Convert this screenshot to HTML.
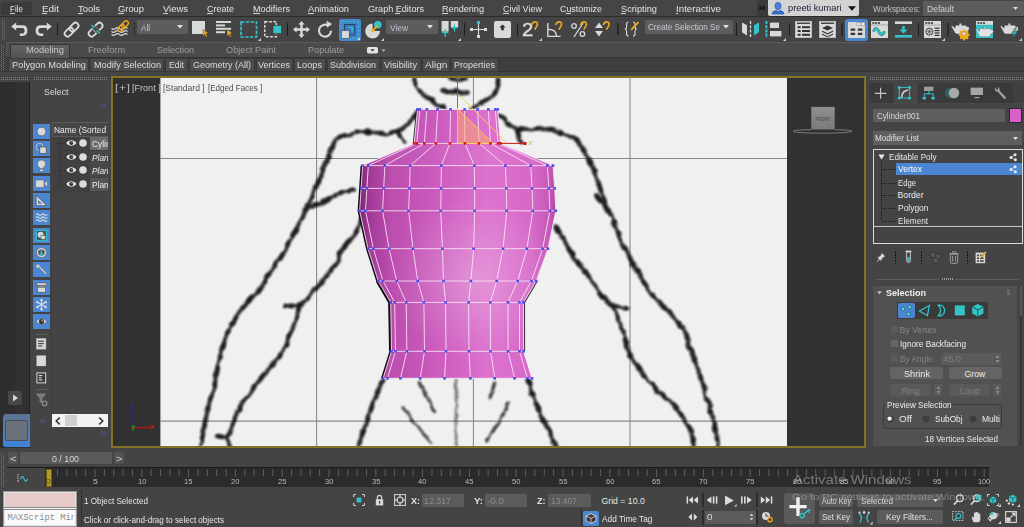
<!DOCTYPE html>
<html lang="en"><head><meta charset="utf-8"><title>3ds Max - Cylinder001</title>
<style>
*{box-sizing:border-box;margin:0;padding:0}
html,body{width:1024px;height:527px;overflow:hidden;background:#444}
body{font-family:"Liberation Sans","DejaVu Sans",sans-serif;font-size:10px;color:#e0e0e0}
#app{position:relative;width:1024px;height:527px;overflow:hidden;background:#444}
.a{position:absolute}
.t{position:absolute;white-space:nowrap;line-height:1}
svg{position:absolute;overflow:visible}

</style></head>
<body>
<div id="app">
<div class="a" style="left:0px;top:0px;width:1024px;height:16px;background:#454545;"></div>
<div class="a" style="left:0px;top:16px;width:1024px;height:1px;background:#2c2c2c;"></div>
<div class="a" style="left:1px;top:2px;width:31px;height:13px;background:#3b3b3b;"></div>
<div class="t" style="left:9.5px;top:2.5px;font-size:9.6px;line-height:12px;color:#e4e4e4;transform:scaleX(0.840);transform-origin:0 50%;">File</div>
<div class="a" style="left:10px;top:13px;width:5px;height:1px;background:#cfcfcf;"></div>
<div class="t" style="left:41.5px;top:2.5px;font-size:9.6px;line-height:12px;color:#e4e4e4;transform:scaleX(1.027);transform-origin:0 50%;">Edit</div>
<div class="a" style="left:42px;top:13px;width:5px;height:1px;background:#cfcfcf;"></div>
<div class="t" style="left:77.5px;top:2.5px;font-size:9.6px;line-height:12px;color:#e4e4e4;transform:scaleX(0.982);transform-origin:0 50%;">Tools</div>
<div class="a" style="left:78px;top:13px;width:5px;height:1px;background:#cfcfcf;"></div>
<div class="t" style="left:117.5px;top:2.5px;font-size:9.6px;line-height:12px;color:#e4e4e4;transform:scaleX(0.975);transform-origin:0 50%;">Group</div>
<div class="a" style="left:118px;top:13px;width:6px;height:1px;background:#cfcfcf;"></div>
<div class="t" style="left:162.5px;top:2.5px;font-size:9.6px;line-height:12px;color:#e4e4e4;transform:scaleX(0.983);transform-origin:0 50%;">Views</div>
<div class="a" style="left:163px;top:13px;width:5px;height:1px;background:#cfcfcf;"></div>
<div class="t" style="left:206.5px;top:2.5px;font-size:9.6px;line-height:12px;color:#e4e4e4;transform:scaleX(0.938);transform-origin:0 50%;">Create</div>
<div class="a" style="left:207px;top:13px;width:6px;height:1px;background:#cfcfcf;"></div>
<div class="t" style="left:252.5px;top:2.5px;font-size:9.6px;line-height:12px;color:#e4e4e4;transform:scaleX(0.951);transform-origin:0 50%;">Modifiers</div>
<div class="a" style="left:253px;top:13px;width:7px;height:1px;background:#cfcfcf;"></div>
<div class="t" style="left:307.5px;top:2.5px;font-size:9.6px;line-height:12px;color:#e4e4e4;transform:scaleX(0.961);transform-origin:0 50%;">Animation</div>
<div class="a" style="left:308px;top:13px;width:6px;height:1px;background:#cfcfcf;"></div>
<div class="t" style="left:367.5px;top:2.5px;font-size:9.6px;line-height:12px;color:#e4e4e4;transform:scaleX(0.946);transform-origin:0 50%;">Graph Editors</div>
<div class="a" style="left:395px;top:13px;width:5px;height:1px;background:#cfcfcf;"></div>
<div class="t" style="left:441.5px;top:2.5px;font-size:9.6px;line-height:12px;color:#e4e4e4;transform:scaleX(0.948);transform-origin:0 50%;">Rendering</div>
<div class="a" style="left:442px;top:13px;width:6px;height:1px;background:#cfcfcf;"></div>
<div class="t" style="left:502.5px;top:2.5px;font-size:9.6px;line-height:12px;color:#e4e4e4;transform:scaleX(0.942);transform-origin:0 50%;">Civil View</div>
<div class="a" style="left:503px;top:13px;width:6px;height:1px;background:#cfcfcf;"></div>
<div class="t" style="left:559.5px;top:2.5px;font-size:9.6px;line-height:12px;color:#e4e4e4;transform:scaleX(0.927);transform-origin:0 50%;">Customize</div>
<div class="a" style="left:566px;top:13px;width:5px;height:1px;background:#cfcfcf;"></div>
<div class="t" style="left:620.5px;top:2.5px;font-size:9.6px;line-height:12px;color:#e4e4e4;transform:scaleX(0.964);transform-origin:0 50%;">Scripting</div>
<div class="a" style="left:621px;top:13px;width:5px;height:1px;background:#cfcfcf;"></div>
<div class="t" style="left:675.5px;top:2.5px;font-size:9.6px;line-height:12px;color:#e4e4e4;transform:scaleX(1.017);transform-origin:0 50%;">Interactive</div>
<div class="a" style="left:676px;top:13px;width:2px;height:1px;background:#cfcfcf;"></div>
<div class="a" style="left:757px;top:0px;width:11px;height:16px;background:#3a3a3a;"></div>
<div class="t" style="left:757.5px;top:1.0px;font-size:11px;line-height:13px;color:#0c0c0c;transform:scaleX(1.250);transform-origin:0 50%;font-weight:bold;">»</div>
<div class="a" style="left:768px;top:0px;width:91px;height:16px;background:#d3d3d3;border-radius:0 0 2px 2px;"></div>
<svg class="a" style="left:771px;top:1px" width="14" height="14" viewBox="0 0 14 14"><ellipse cx="7" cy="5" rx="3" ry="3.6" fill="#4a80d8" stroke="#2458b0" stroke-width="0.8"/><path d="M1 13 Q1.5 9.8 5 9.6 L7 10.6 L9 9.6 Q12.5 9.8 13 13 Z" fill="#3a70d0" stroke="#2458b0" stroke-width="0.8"/></svg>
<div class="t" style="left:788.0px;top:2.0px;font-size:9.6px;line-height:12px;color:#26203a;transform:scaleX(0.965);transform-origin:0 50%;">preeti kumari</div>
<svg class="a" style="left:848px;top:6px" width="8" height="5" viewBox="0 0 8 5"><path d="M0 0.3H8L4 4.8Z" fill="#101010"/></svg>
<div class="t" style="left:872.5px;top:3.0px;font-size:9.4px;line-height:11px;color:#c4c4c4;transform:scaleX(0.870);transform-origin:0 50%;">Workspaces:</div>
<div class="a" style="left:923px;top:1px;width:101px;height:15px;background:#5c5c5c;"></div>
<div class="t" style="left:926.5px;top:3.0px;font-size:9.4px;line-height:11px;color:#d0d0d0;transform:scaleX(0.909);transform-origin:0 50%;">Default</div>
<svg class="a" style="left:1013px;top:7px" width="5" height="3" viewBox="0 0 5 3"><path d="M0 0H5L2.5 3Z" fill="#dcdcdc"/></svg>
<div class="a" style="left:0px;top:17px;width:1024px;height:25px;background:#444;"></div>
<div class="a" style="left:2px;top:19px;width:1px;height:21px;background:repeating-linear-gradient(#9a9a9a 0 1px,transparent 1px 2px);opacity:.55"></div><div class="a" style="left:4px;top:20px;width:1px;height:20px;background:repeating-linear-gradient(#9a9a9a 0 1px,transparent 1px 2px);opacity:.55"></div>
<svg class="a" style="left:11px;top:22px" width="17" height="15" viewBox="0 0 17 15"><path d="M0.2 4.6L5.2 0.6V3.3H11.4Q16.4 3.3 16.4 8.6Q16.4 14 11.4 14H8.8V11.4H11.4Q13.6 11.4 13.6 8.6Q13.6 5.9 11.4 5.9H5.2V8.6Z" fill="#d9d9d9"/></svg>
<svg class="a" style="left:35px;top:22px" width="17" height="15" viewBox="0 0 17 15"><path d="M16.8 4.6L11.8 0.6V3.3H5.6Q0.6 3.3 0.6 8.6Q0.6 14 5.6 14H8.2V11.4H5.6Q3.4 11.4 3.4 8.6Q3.4 5.9 5.6 5.9H11.8V8.6Z" fill="#d9d9d9"/></svg>
<div class="a" style="left:57px;top:23px;width:1px;height:13px;background:#1c1c1c;"></div>
<svg class="a" style="left:64px;top:22px" width="15" height="15" viewBox="0 0 15 15"><g fill="none" stroke="#d9d9d9" stroke-width="1.8"><rect x="-3" y="-5" width="6" height="10" rx="3" transform="translate(5.1 10.1) rotate(45)"/><rect x="-3" y="-5" width="6" height="10" rx="3" transform="translate(10.1 5.1) rotate(45)"/></g></svg>
<svg class="a" style="left:88px;top:22px" width="15" height="15" viewBox="0 0 15 15"><g fill="none" stroke="#d9d9d9" stroke-width="1.8"><rect x="-3" y="-5" width="6" height="10" rx="3" transform="translate(5.1 10.1) rotate(45)"/><rect x="-3" y="-5" width="6" height="10" rx="3" transform="translate(10.1 5.1) rotate(45)"/></g><line x1="2.6" y1="2.2" x2="12.6" y2="12.2" stroke="#444" stroke-width="3.6"/><line x1="3.4" y1="3" x2="6.6" y2="6.2" stroke="#33c3c8" stroke-width="1.4"/><line x1="8.6" y1="8.2" x2="11.8" y2="11.4" stroke="#33c3c8" stroke-width="1.4"/></svg>
<svg class="a" style="left:111px;top:21px" width="18" height="17" viewBox="0 0 18 17"><g fill="none" stroke="#d9d9d9" stroke-width="1.2"><path d="M0.5 7.5q2 1.8 4 0t4 0t4 0t4 0"/><path d="M0.5 10.5q2 1.8 4 0t4 0t4 0t4 0"/><path d="M0.5 13.5q2 1.8 4 0t4 0t4 0t4 0"/></g><g fill="none" stroke="#f2a91c" stroke-width="1.4"><rect x="-2.3" y="-3.8" width="4.6" height="7.6" rx="2.3" transform="translate(10.2 7) rotate(45)"/><rect x="-2.3" y="-3.8" width="4.6" height="7.6" rx="2.3" transform="translate(14 3.2) rotate(45)"/></g></svg>
<div class="a" style="left:134px;top:23px;width:1px;height:13px;background:repeating-linear-gradient(#1a1a1a 0 1px,transparent 1px 2px)"></div>
<div class="a" style="left:137px;top:20px;width:51px;height:14px;background:#5d5d5d;"></div>
<div class="t" style="left:140.5px;top:21.5px;font-size:9.6px;line-height:12px;color:#b9c4d2;transform:scaleX(0.843);transform-origin:0 50%;">All</div>
<svg class="a" style="left:177px;top:25px" width="6" height="4" viewBox="0 0 6 4"><path d="M0 0H6L3 3.6Z" fill="#e0e0e0"/></svg>
<svg class="a" style="left:192px;top:21px" width="17" height="17" viewBox="0 0 17 17"><rect x="0" y="0" width="13" height="13" fill="#d9d9d9"/><path d="M11 8.2L16.6 12.4L14 12.8L15.3 15.6L14.2 16.2L12.9 13.4L11 15.2Z" fill="#f2a91c" stroke="#444" stroke-width="0.4"/></svg>
<svg class="a" style="left:216px;top:21px" width="17" height="17" viewBox="0 0 17 17"><g fill="#d9d9d9"><rect x="0" y="0" width="15" height="2"/><rect x="0" y="3.4" width="9" height="2"/><rect x="0" y="6.8" width="15" height="2"/><rect x="0" y="10.2" width="9" height="2"/></g><path d="M11 8.2L16.6 12.4L14 12.8L15.3 15.6L14.2 16.2L12.9 13.4L11 15.2Z" fill="#f2a91c" stroke="#444" stroke-width="0.4"/></svg>
<svg class="a" style="left:240px;top:21px" width="18" height="17" viewBox="0 0 18 17"><rect x="1" y="1" width="15.5" height="15" fill="none" stroke="#33c3c8" stroke-width="1.7" stroke-dasharray="3.4 1.4"/></svg>
<svg class="a" style="left:258px;top:38px" width="3" height="3" viewBox="0 0 3 3"><path d="M3 0V3H0Z" fill="#cfcfcf"/></svg>
<svg class="a" style="left:264px;top:21px" width="18" height="17" viewBox="0 0 18 17"><rect x="0.8" y="0.8" width="11.6" height="15" fill="none" stroke="#d9d9d9" stroke-width="1.5" stroke-dasharray="2.8 1.5"/><rect x="9" y="4.4" width="8.4" height="8" fill="#33c3c8" stroke="#444" stroke-width="0.8"/></svg>
<div class="a" style="left:287px;top:23px;width:1px;height:13px;background:#1c1c1c;"></div>
<svg class="a" style="left:293px;top:21px" width="17" height="17" viewBox="0 0 17 17"><path d="M8.5 0L11.6 3.6H9.7V7.3H13.4V5.4L17 8.5L13.4 11.6V9.7H9.7V13.4H11.6L8.5 17L5.4 13.4H7.3V9.7H3.6V11.6L0 8.5L3.6 5.4V7.3H7.3V3.6H5.4Z" fill="#d9d9d9"/></svg>
<svg class="a" style="left:317px;top:21px" width="16" height="17" viewBox="0 0 16 17"><path d="M11.2 4.6A6 6 0 1 0 14 9.8" fill="none" stroke="#d9d9d9" stroke-width="2.1"/><path d="M9 0.2L15 2.6L10.6 7Z" fill="#d9d9d9" transform="rotate(8 12 3.5)"/></svg>
<div class="a" style="left:339px;top:19px;width:22px;height:22px;background:#4b86d4;border-radius:2px;"></div>
<svg class="a" style="left:341px;top:21px" width="18" height="18" viewBox="0 0 18 18"><rect x="1" y="1" width="16" height="16" fill="none" stroke="#33c3c8" stroke-width="1.3" stroke-dasharray="2.6 1.3"/><rect x="1.6" y="1.6" width="14.8" height="14.8" fill="none" stroke="#1c2c3c" stroke-width="0.5" stroke-dasharray="2.6 1.3" opacity=".6"/><rect x="3.4" y="3.6" width="10.6" height="10.4" fill="#3f78c6" stroke="#22354f" stroke-width="0.8"/><path d="M7 6.4H11.2V10.6" fill="none" stroke="#33c3c8" stroke-width="1.4"/><rect x="0.6" y="9.6" width="7.6" height="7.6" fill="#d9d9d9" stroke="#3a3a3a" stroke-width="0.5"/></svg>
<svg class="a" style="left:357px;top:37px" width="3" height="3" viewBox="0 0 3 3"><path d="M3 0V3H0Z" fill="#cfcfcf"/></svg>
<svg class="a" style="left:365px;top:21px" width="18" height="18" viewBox="0 0 18 18"><circle cx="7.6" cy="10" r="7.4" fill="#d9d9d9"/><path d="M7.6 10L7.6 1.5A8 8 0 0 1 16.2 10Z" fill="#444"/><circle cx="12.8" cy="3.8" r="3.8" fill="#33c3c8"/><line x1="8" y1="9.4" x2="12.2" y2="4.6" stroke="#f2a91c" stroke-width="1.8"/><rect x="6.6" y="8" width="2.8" height="2.8" fill="#f2a91c" transform="rotate(45 8 9.4)"/></svg>
<svg class="a" style="left:381px;top:38px" width="3" height="3" viewBox="0 0 3 3"><path d="M3 0V3H0Z" fill="#cfcfcf"/></svg>
<div class="a" style="left:386px;top:20px;width:52px;height:14px;background:#5d5d5d;"></div>
<div class="t" style="left:389.5px;top:21.5px;font-size:9.6px;line-height:12px;color:#b9c0cc;transform:scaleX(0.873);transform-origin:0 50%;">View</div>
<svg class="a" style="left:427px;top:25px" width="6" height="4" viewBox="0 0 6 4"><path d="M0 0H6L3 3.6Z" fill="#e0e0e0"/></svg>
<svg class="a" style="left:441px;top:21px" width="18" height="18" viewBox="0 0 18 18"><rect x="0.6" y="0" width="7" height="10.6" fill="#d9d9d9"/><rect x="9.8" y="0" width="7.4" height="6.4" fill="#d9d9d9"/><path d="M4.2 8V16M1 11.6H7.4" stroke="#33c3c8" stroke-width="1.3" fill="none"/><path d="M13.4 3.4V10.6M10.4 6.8H16.4" stroke="#33c3c8" stroke-width="1.3" fill="none"/></svg>
<svg class="a" style="left:458px;top:38px" width="3" height="3" viewBox="0 0 3 3"><path d="M3 0V3H0Z" fill="#cfcfcf"/></svg>
<div class="a" style="left:464px;top:23px;width:1px;height:13px;background:#1c1c1c;"></div>
<svg class="a" style="left:470px;top:21px" width="17" height="17" viewBox="0 0 17 17"><path d="M8.5 3V15M1.5 8.5H15.5" stroke="#d9d9d9" stroke-width="1.1" fill="none"/><rect x="7" y="0" width="3" height="3" fill="#33c3c8"/><rect x="0" y="7" width="3" height="3" fill="#d9d9d9"/><rect x="14" y="7" width="3" height="3" fill="#d9d9d9"/><rect x="7" y="14" width="3" height="3" fill="#d9d9d9"/></svg>
<svg class="a" style="left:494px;top:21px" width="17" height="17" viewBox="0 0 17 17"><rect x="0" y="0" width="17" height="17" rx="2.2" fill="#d9d9d9"/><path d="M8.5 3.6L11.6 6.6H9.8V9.2H7.2V6.6H5.4Z" fill="#2e2e2e"/></svg>
<div class="a" style="left:517px;top:23px;width:1px;height:13px;background:#1c1c1c;"></div>
<div class="t" style="left:522.2px;top:19.2px;font-size:18px;line-height:22px;color:#dcdcdc;transform:scaleX(1.128);transform-origin:0 50%;-webkit-text-stroke:0.4px #dcdcdc;">2</div>
<svg class="a" style="left:523px;top:21px" width="18" height="17" viewBox="0 0 18 17"><path d="M8.5 4q1.6 -3.8 4.4 -2.9q2.6 1 0.9 4l-2.1 3.6" fill="none" stroke="#f2a91c" stroke-width="1.6"/></svg>
<svg class="a" style="left:539px;top:38px" width="3" height="3" viewBox="0 0 3 3"><path d="M3 0V3H0Z" fill="#cfcfcf"/></svg>
<svg class="a" style="left:547px;top:21px" width="18" height="17" viewBox="0 0 18 17"><path d="M0.8 2V15.4H13.6M0.8 8.4Q9 8 9.6 15.2" fill="none" stroke="#d9d9d9" stroke-width="1.4"/><path d="M8.6 4q1.6 -3.8 4.4 -2.9q2.6 1 0.9 4l-2.1 3.6" fill="none" stroke="#f2a91c" stroke-width="1.6"/></svg>
<svg class="a" style="left:571px;top:21px" width="18" height="17" viewBox="0 0 18 17"><g fill="none" stroke="#d9d9d9" stroke-width="1.3"><circle cx="3" cy="5" r="2.3"/><circle cx="11.4" cy="13" r="2.3"/><line x1="3" y1="16" x2="12" y2="2"/></g><path d="M9.5 4q1.6 -3.8 4.4 -2.9q2.6 1 0.9 4l-2.1 3.6" fill="none" stroke="#f2a91c" stroke-width="1.6"/></svg>
<svg class="a" style="left:595px;top:21px" width="18" height="17" viewBox="0 0 18 17"><path d="M4 1.6L8 7H0ZM4 15.4L8 10H0Z" fill="#d9d9d9"/><path d="M8.2 4q1.6 -3.8 4.4 -2.9q2.6 1 0.9 4l-2.1 3.6" fill="none" stroke="#f2a91c" stroke-width="1.6"/></svg>
<div class="a" style="left:617px;top:23px;width:2px;height:12px;background:#2a2a2a;"></div>
<svg class="a" style="left:624px;top:21px" width="16" height="17" viewBox="0 0 16 17"><path d="M4.6 1Q2.6 1 2.6 3V6Q2.6 8 0.8 8Q2.6 8 2.6 10V13Q2.6 15 4.6 15M9 1Q11 1 11 3V6Q11 8 12.8 8Q11 8 11 10V13Q11 15 9 15" fill="none" stroke="#d9d9d9" stroke-width="1.1"/><line x1="7.4" y1="8.6" x2="14.4" y2="1.2" stroke="#f2a91c" stroke-width="1.9"/><path d="M6.6 9.6L7 8.2L8 9.2Z" fill="#f2a91c"/></svg>
<div class="a" style="left:645px;top:20px;width:88px;height:14px;background:#5d5d5d;"></div>
<div class="t" style="left:647.5px;top:21.2px;font-size:9.6px;line-height:12px;color:#c6ccd4;transform:scaleX(0.844);transform-origin:0 50%;">Create Selection Se</div>
<svg class="a" style="left:723px;top:25px" width="6" height="4" viewBox="0 0 6 4"><path d="M0 0H6L3 3.6Z" fill="#e0e0e0"/></svg>
<div class="a" style="left:736px;top:23px;width:1px;height:13px;background:#1c1c1c;"></div>
<svg class="a" style="left:742px;top:21px" width="18" height="17" viewBox="0 0 18 17"><path d="M0 1.5L5 4.2V14.4L0 11.2Z" fill="#d9d9d9"/><path d="M17 1.5L12 4.2V14.4L17 11.2Z" fill="#33c3c8"/><line x1="8.5" y1="0" x2="8.5" y2="17" stroke="#d9d9d9" stroke-width="1.3" stroke-dasharray="3 1.3"/></svg>
<svg class="a" style="left:765px;top:21px" width="18" height="17" viewBox="0 0 18 17"><line x1="1.4" y1="0" x2="1.4" y2="17" stroke="#33c3c8" stroke-width="2" stroke-dasharray="3 1.2"/><rect x="5" y="1.6" width="9" height="5.4" fill="#d9d9d9"/><rect x="5" y="10" width="11.4" height="5.4" fill="#d9d9d9"/></svg>
<svg class="a" style="left:783px;top:38px" width="3" height="3" viewBox="0 0 3 3"><path d="M3 0V3H0Z" fill="#cfcfcf"/></svg>
<div class="a" style="left:789px;top:23px;width:1px;height:13px;background:#1c1c1c;"></div>
<svg class="a" style="left:795px;top:21px" width="17" height="17" viewBox="0 0 17 17"><rect x="0.5" y="0.5" width="16" height="16" fill="#d9d9d9" stroke="#bdbdbd" stroke-width="1"/><g fill="#333"><rect x="2" y="1.6" width="13" height="1.3"/><rect x="2.6" y="5.2" width="3" height="2"/><rect x="7" y="5.2" width="8" height="2"/><rect x="2.6" y="9" width="3" height="2"/><rect x="7" y="9" width="8" height="2"/><rect x="2.6" y="12.8" width="3" height="2"/><rect x="7" y="12.8" width="8" height="2"/></g></svg>
<svg class="a" style="left:819px;top:21px" width="17" height="17" viewBox="0 0 17 17"><rect x="0.5" y="0.5" width="16" height="16" fill="#d9d9d9" stroke="#bdbdbd" stroke-width="1"/><g fill="#333"><rect x="2" y="1.6" width="13" height="1.3"/><path d="M8.5 4.4L14 7L8.5 9.6L3 7Z"/><path d="M3 9.6L8.5 12.2L14 9.6L14 10.8L8.5 13.4L3 10.8Z"/><path d="M3 12.6L8.5 15.2L14 12.6L14 13.8L8.5 16.2L3 13.8Z"/></g></svg>
<div class="a" style="left:841px;top:23px;width:2px;height:13px;background:#2c2c2c;"></div>
<div class="a" style="left:845px;top:19px;width:23px;height:22px;background:#4b86d4;border-radius:3px;"></div>
<svg class="a" style="left:848px;top:22px" width="17" height="16" viewBox="0 0 17 16"><rect x="0" y="0" width="17" height="16" fill="#d9d9d9"/><rect x="9" y="0.6" width="3.4" height="3" fill="#f2f2f2" stroke="#777" stroke-width="0.5"/><rect x="13" y="0.6" width="3.4" height="3" fill="#f2f2f2" stroke="#777" stroke-width="0.5"/><g fill="#333"><rect x="2.6" y="6.6" width="4.6" height="2.2" rx=".6"/><rect x="9.8" y="6.6" width="4.6" height="2.2" rx=".6"/><rect x="2.6" y="10.8" width="4.6" height="2.2" rx=".6"/><rect x="9.8" y="10.8" width="4.6" height="2.2" rx=".6"/></g></svg>
<svg class="a" style="left:871px;top:21px" width="17" height="17" viewBox="0 0 17 17"><rect x="0" y="0" width="17" height="17" fill="#d9d9d9"/><rect x="0" y="3.6" width="17" height="0.8" fill="#999"/><g fill="#333"><rect x="1.4" y="1.2" width="2" height="1.6"/><rect x="4.2" y="1.2" width="2" height="1.6"/><rect x="7" y="1.2" width="2" height="1.6"/></g><path d="M2.4 10.6q2.4 -6 5.4 0t5.8 -0.4" fill="none" stroke="#1c7c82" stroke-width="2.8"/><path d="M2.4 10.6q2.4 -6 5.4 0t5.8 -0.4" fill="none" stroke="#33c3c8" stroke-width="1.6"/></svg>
<svg class="a" style="left:895px;top:21px" width="17" height="17" viewBox="0 0 17 17"><rect x="0" y="0.4" width="17" height="2.6" fill="#d9d9d9"/><path d="M7.2 5H9.8V8.6H12.6L8.5 12.6L4.4 8.6H7.2Z" fill="#33c3c8"/><rect x="0" y="14" width="17" height="2.6" fill="#33c3c8"/></svg>
<div class="a" style="left:918px;top:23px;width:1px;height:13px;background:#1c1c1c;"></div>
<svg class="a" style="left:924px;top:21px" width="17" height="17" viewBox="0 0 17 17"><rect x="0" y="0" width="17" height="17" fill="#d9d9d9"/><rect x="0" y="3.6" width="17" height="0.8" fill="#999"/><g fill="#333"><rect x="1.4" y="1.2" width="2" height="1.6"/><rect x="4.2" y="1.2" width="2" height="1.6"/><rect x="7" y="1.2" width="2" height="1.6"/><rect x="10.6" y="6.6" width="5" height="1.2"/><rect x="10.6" y="9" width="5" height="1.2"/><rect x="10.6" y="11.4" width="5" height="1.2"/><rect x="10.6" y="13.8" width="5" height="1.2"/></g><circle cx="5.4" cy="10.6" r="3.6" fill="none" stroke="#333" stroke-width="0.8"/><path d="M5.4 7V14.2M1.8 10.6H9M2.9 8.1L7.9 13.1M7.9 8.1L2.9 13.1" stroke="#333" stroke-width="0.5" fill="none"/></svg>
<svg class="a" style="left:942px;top:38px" width="3" height="3" viewBox="0 0 3 3"><path d="M3 0V3H0Z" fill="#cfcfcf"/></svg>
<div class="a" style="left:947px;top:23px;width:2px;height:13px;background:#2c2c2c;"></div>
<svg class="a" style="left:952px;top:21px" width="18" height="18" viewBox="0 0 18 18"><path d="M8.4 4.6m-4.6 0h9.2q1.4 0 1.6 1.2q2.6 -0.6 2.6 1.6q0 2.2 -2.8 3q-0.6 1.6 -1.8 2.4h-8.4q-1.6 -1.2 -2.2 -3l-2.6 -4.6l0.8 -0.4l3 2.6q0.2 -1.6 0.6 -2.8zM8.4 4.6m-1 -2.2h2v2.2h-2z" fill="#d9d9d9"/><g transform="translate(12.2 12.6)"><path d="M-1 -4.6h2l.3 1.3l1.2 .5l1.1 -.7l1.4 1.4l-.7 1.1l.5 1.2l1.3 .3v2l-1.3 .3l-.5 1.2l.7 1.1l-1.4 1.4l-1.1 -.7l-1.2 .5l-.3 1.3h-2l-.3 -1.3l-1.2 -.5l-1.1 .7l-1.4 -1.4l.7 -1.1l-.5 -1.2l-1.3 -.3v-2l1.3 -.3l.5 -1.2l-.7 -1.1l1.4 -1.4l1.1 .7l1.2 -.5z" fill="#f2a91c" transform="scale(.9)"/><circle r="1.7" fill="#e8e8e8" stroke="#888" stroke-width=".5"/></g></svg>
<svg class="a" style="left:976px;top:21px" width="18" height="17" viewBox="0 0 18 17"><rect x="0" y="0" width="17" height="17" fill="#33c3c8"/><rect x="0" y="0" width="17" height="3.8" fill="#d9d9d9"/><g fill="#333"><rect x="1.4" y="1.2" width="2" height="1.6"/><rect x="4.2" y="1.2" width="2" height="1.6"/><rect x="7" y="1.2" width="2" height="1.6"/></g><path stroke="#4a6a6c" stroke-width="0.4" d="M8.6 7.6m-4.6 0h9.2q1.4 0 1.6 1.2q2.6 -0.6 2.6 1.6q0 2.2 -2.8 3q-0.6 1.6 -1.8 2.4h-8.4q-1.6 -1.2 -2.2 -3l-2.6 -4.6l0.8 -0.4l3 2.6q0.2 -1.6 0.6 -2.8zM8.6 7.6m-1 -2.2h2v2.2h-2z" fill="#e4e4e4"/></svg>
<svg class="a" style="left:1001px;top:21px" width="18" height="18" viewBox="0 0 18 18"><path d="M8.4 4.6m-4.6 0h9.2q1.4 0 1.6 1.2q2.6 -0.6 2.6 1.6q0 2.2 -2.8 3q-0.6 1.6 -1.8 2.4h-8.4q-1.6 -1.2 -2.2 -3l-2.6 -4.6l0.8 -0.4l3 2.6q0.2 -1.6 0.6 -2.8zM8.4 4.6m-1 -2.2h2v2.2h-2z" fill="#d9d9d9"/><path d="M14.2 6.8L10.6 12.2H13L11.4 17L16.4 10.6H13.6L15.6 6.8Z" fill="#33c3c8" stroke="#444" stroke-width=".5"/></svg>
<svg class="a" style="left:1019px;top:38px" width="3" height="3" viewBox="0 0 3 3"><path d="M3 0V3H0Z" fill="#cfcfcf"/></svg>
<div class="a" style="left:0px;top:42px;width:1024px;height:30px;background:#404040;"></div>
<div class="a" style="left:1px;top:44px;width:1px;height:27px;background:repeating-linear-gradient(#9a9a9a 0 1px,transparent 1px 2px);opacity:.55"></div><div class="a" style="left:3px;top:45px;width:1px;height:26px;background:repeating-linear-gradient(#9a9a9a 0 1px,transparent 1px 2px);opacity:.55"></div>
<div class="a" style="left:6px;top:42px;width:1018px;height:16px;background:#4b4b4b;border-top:1px solid #5a5a5a;border-left:1px solid #585858;"></div>
<div class="a" style="left:6px;top:57px;width:1018px;height:1px;background:#333;"></div>
<div class="a" style="left:10px;top:44px;width:60px;height:14px;background:linear-gradient(#626262,#545454);border:1px solid #353535;border-bottom:none;border-radius:2px 2px 0 0;"></div>
<div class="t" style="left:25.5px;top:44.2px;font-size:9.6px;line-height:12px;color:#c4c8cc;transform:scaleX(0.976);transform-origin:0 50%;">Modeling</div>
<div class="t" style="left:87.5px;top:44.2px;font-size:9.6px;line-height:12px;color:#9a9ea2;transform:scaleX(0.951);transform-origin:0 50%;">Freeform</div>
<div class="t" style="left:156.5px;top:44.2px;font-size:9.6px;line-height:12px;color:#9a9ea2;transform:scaleX(0.937);transform-origin:0 50%;">Selection</div>
<div class="t" style="left:225.5px;top:44.2px;font-size:9.6px;line-height:12px;color:#9a9ea2;transform:scaleX(0.957);transform-origin:0 50%;">Object Paint</div>
<div class="t" style="left:307.5px;top:44.2px;font-size:9.6px;line-height:12px;color:#9a9ea2;transform:scaleX(0.950);transform-origin:0 50%;">Populate</div>
<svg class="a" style="left:367px;top:47px" width="20" height="7" viewBox="0 0 20 7"><rect x="0" y="0" width="11" height="6.4" rx="1.6" fill="#e4e4e4"/><path d="M3.4 2.2H7.6L5.5 4.6Z" fill="#333"/><path d="M14.6 2.4H18.6L16.6 4.8Z" fill="#bdbdbd"/></svg>
<div class="a" style="left:6px;top:58px;width:1018px;height:13px;background:#3e3e3e;"></div>
<div class="a" style="left:0px;top:71px;width:1024px;height:1px;background:#363636;"></div>
<div class="a" style="left:0px;top:72px;width:1024px;height:4px;background:#444;"></div>
<div class="a" style="left:8px;top:58px;width:81px;height:14px;background:#4c4c4c;border:1px solid #383838;border-top-color:#3a3a3a;"></div>
<div class="t" style="left:11.5px;top:58.5px;font-size:9.6px;line-height:12px;color:#dcdcdc;transform:scaleX(0.970);transform-origin:0 50%;">Polygon Modeling</div>
<div class="a" style="left:90px;top:58px;width:74px;height:14px;background:#4c4c4c;border:1px solid #383838;border-top-color:#3a3a3a;"></div>
<div class="t" style="left:93.5px;top:58.5px;font-size:9.6px;line-height:12px;color:#dcdcdc;transform:scaleX(0.952);transform-origin:0 50%;">Modify Selection</div>
<div class="a" style="left:165px;top:58px;width:23px;height:14px;background:#4c4c4c;border:1px solid #383838;border-top-color:#3a3a3a;"></div>
<div class="t" style="left:168.5px;top:58.5px;font-size:9.6px;line-height:12px;color:#dcdcdc;transform:scaleX(0.907);transform-origin:0 50%;">Edit</div>
<div class="a" style="left:189px;top:58px;width:66px;height:14px;background:#4c4c4c;border:1px solid #383838;border-top-color:#3a3a3a;"></div>
<div class="t" style="left:192.5px;top:58.5px;font-size:9.6px;line-height:12px;color:#dcdcdc;transform:scaleX(0.938);transform-origin:0 50%;">Geometry (All)</div>
<div class="a" style="left:256px;top:58px;width:37px;height:14px;background:#4c4c4c;border:1px solid #383838;border-top-color:#3a3a3a;"></div>
<div class="t" style="left:257.5px;top:58.5px;font-size:9.6px;line-height:12px;color:#dcdcdc;transform:scaleX(0.937);transform-origin:0 50%;">Vertices</div>
<div class="a" style="left:294px;top:58px;width:32px;height:14px;background:#4c4c4c;border:1px solid #383838;border-top-color:#3a3a3a;"></div>
<div class="t" style="left:296.5px;top:58.5px;font-size:9.6px;line-height:12px;color:#dcdcdc;transform:scaleX(0.956);transform-origin:0 50%;">Loops</div>
<div class="a" style="left:327px;top:58px;width:53px;height:14px;background:#4c4c4c;border:1px solid #383838;border-top-color:#3a3a3a;"></div>
<div class="t" style="left:329.5px;top:58.5px;font-size:9.6px;line-height:12px;color:#dcdcdc;transform:scaleX(0.937);transform-origin:0 50%;">Subdivision</div>
<div class="a" style="left:381px;top:58px;width:40px;height:14px;background:#4c4c4c;border:1px solid #383838;border-top-color:#3a3a3a;"></div>
<div class="t" style="left:383.5px;top:58.5px;font-size:9.6px;line-height:12px;color:#dcdcdc;transform:scaleX(0.957);transform-origin:0 50%;">Visibility</div>
<div class="a" style="left:422px;top:58px;width:28px;height:14px;background:#4c4c4c;border:1px solid #383838;border-top-color:#3a3a3a;"></div>
<div class="t" style="left:424.5px;top:58.5px;font-size:9.6px;line-height:12px;color:#dcdcdc;transform:scaleX(1.045);transform-origin:0 50%;">Align</div>
<div class="a" style="left:451px;top:58px;width:48px;height:14px;background:#4c4c4c;border:1px solid #383838;border-top-color:#3a3a3a;"></div>
<div class="t" style="left:453.5px;top:58.5px;font-size:9.6px;line-height:12px;color:#dcdcdc;transform:scaleX(0.937);transform-origin:0 50%;">Properties</div>
<div class="a" style="left:1px;top:77px;width:27px;height:3px;background:repeating-linear-gradient(90deg,#9a9a9a 0 1px,transparent 1px 2px);opacity:.75"></div>
<div class="a" style="left:1px;top:78px;width:27px;height:1px;background:#444;"></div>
<div class="a" style="left:34px;top:77px;width:73px;height:3px;background:repeating-linear-gradient(90deg,#9a9a9a 0 1px,transparent 1px 2px);opacity:.75"></div>
<div class="a" style="left:34px;top:78px;width:73px;height:1px;background:#444;"></div>
<div class="a" style="left:0px;top:82px;width:30px;height:445px;background:#2d2d2d;"></div>
<div class="a" style="left:15px;top:82px;width:14px;height:370px;background:#313131;"></div>
<div class="a" style="left:29px;top:82px;width:1px;height:370px;background:#1e1e1e;"></div>
<div class="a" style="left:30px;top:82px;width:81px;height:370px;background:#444;"></div>
<div class="a" style="left:51px;top:193px;width:1px;height:220px;background:#3d3d3d;"></div>
<div class="t" style="left:44.0px;top:85.8px;font-size:9.6px;line-height:12px;color:#dedede;transform:scaleX(0.919);transform-origin:0 50%;">Select</div>
<div class="t" style="left:99.5px;top:99.6px;font-size:10px;line-height:12px;color:#4c5a9c;transform:scaleX(1.250);transform-origin:0 50%;">»</div>
<div class="a" style="left:33px;top:123.7px;width:17px;height:15px;background:#4b86d4;"></div>
<svg class="a" style="left:33px;top:123.7px" width="17" height="15" viewBox="0 0 17 15"><circle cx="8.5" cy="7.5" r="4.3" fill="#d9d9d9" stroke="#555" stroke-width=".6"/></svg>
<div class="a" style="left:33px;top:141.0px;width:17px;height:15px;background:#4b86d4;"></div>
<svg class="a" style="left:33px;top:141.0px" width="17" height="15" viewBox="0 0 17 15"><circle cx="6.6" cy="6" r="3.8" fill="none" stroke="#d9d9d9" stroke-width="1"/><circle cx="6.6" cy="6" r="4.4" fill="none" stroke="#444" stroke-width=".4"/><rect x="6.8" y="6" width="6.4" height="6.4" fill="#d9d9d9" stroke="#444" stroke-width=".7"/></svg>
<div class="a" style="left:33px;top:158.3px;width:17px;height:15px;background:#4b86d4;"></div>
<svg class="a" style="left:33px;top:158.3px" width="17" height="15" viewBox="0 0 17 15"><path d="M8.5 2A3.9 3.9 0 0 0 6.3 9.2V10.6H10.7V9.2A3.9 3.9 0 0 0 8.5 2Z" fill="#d9d9d9" stroke="#555" stroke-width=".5"/><rect x="6.8" y="11.2" width="3.4" height="2" fill="#d9d9d9" stroke="#555" stroke-width=".4"/></svg>
<div class="a" style="left:33px;top:175.7px;width:17px;height:15px;background:#4b86d4;"></div>
<svg class="a" style="left:33px;top:175.7px" width="17" height="15" viewBox="0 0 17 15"><rect x="2.6" y="4" width="8.4" height="7.4" rx="1" fill="#d9d9d9" stroke="#555" stroke-width=".5"/><path d="M11 7.7L14.4 4.8V10.8Z" fill="#d9d9d9" stroke="#555" stroke-width=".4"/></svg>
<div class="a" style="left:33px;top:193.0px;width:17px;height:15px;background:#4b86d4;"></div>
<svg class="a" style="left:33px;top:193.0px" width="17" height="15" viewBox="0 0 17 15"><path d="M3.2 2.4V12.6H13.6Z" fill="#d9d9d9" stroke="#444" stroke-width=".6"/><path d="M5.4 7.4V10.6H8.6Z" fill="#4b86d4" stroke="#444" stroke-width=".4"/></svg>
<div class="a" style="left:33px;top:210.3px;width:17px;height:15px;background:#4b86d4;"></div>
<svg class="a" style="left:33px;top:210.3px" width="17" height="15" viewBox="0 0 17 15"><g fill="none" stroke="#d9d9d9" stroke-width="1.1"><path d="M3 4.6q1.4 -1.4 2.8 0t2.8 0t2.8 0t2.8 0"/><path d="M3 7.6q1.4 -1.4 2.8 0t2.8 0t2.8 0t2.8 0"/><path d="M3 10.6q1.4 -1.4 2.8 0t2.8 0t2.8 0t2.8 0"/></g></svg>
<div class="a" style="left:33px;top:227.6px;width:17px;height:15px;background:#4b86d4;"></div>
<svg class="a" style="left:33px;top:227.6px" width="17" height="15" viewBox="0 0 17 15"><rect x="3.4" y="2.4" width="10.2" height="10.2" fill="#3a5a64" stroke="#33c3c8" stroke-width="1"/><circle cx="7.6" cy="6.8" r="3" fill="#d9d9d9"/><rect x="8" y="7.6" width="4.4" height="3.8" fill="#d9d9d9" stroke="#444" stroke-width=".5"/></svg>
<div class="a" style="left:33px;top:244.9px;width:17px;height:15px;background:#4b86d4;"></div>
<svg class="a" style="left:33px;top:244.9px" width="17" height="15" viewBox="0 0 17 15"><circle cx="8.5" cy="7.6" r="5" fill="#d9d9d9" stroke="#555" stroke-width=".6"/><circle cx="8.5" cy="7.6" r="3.2" fill="#4a4a4a"/><path d="M7.6 5.6H9.4V8.4H11L8.5 11.4L6 8.4H7.6Z" fill="#33c3c8"/></svg>
<div class="a" style="left:33px;top:262.3px;width:17px;height:15px;background:#4b86d4;"></div>
<svg class="a" style="left:33px;top:262.3px" width="17" height="15" viewBox="0 0 17 15"><circle cx="5" cy="4.2" r="2" fill="#d9d9d9" stroke="#555" stroke-width=".4"/><path d="M5.6 5.2L12.6 12.4L13.6 11.2L7.2 4.6Z" fill="#d9d9d9" stroke="#555" stroke-width=".4"/></svg>
<div class="a" style="left:33px;top:279.6px;width:17px;height:15px;background:#4b86d4;"></div>
<svg class="a" style="left:33px;top:279.6px" width="17" height="15" viewBox="0 0 17 15"><rect x="3.6" y="3" width="9.8" height="2.6" fill="#d9d9d9" stroke="#444" stroke-width=".5"/><rect x="4.6" y="5.6" width="7.8" height="6.6" fill="#d9d9d9" stroke="#444" stroke-width=".5"/><rect x="4.6" y="6.4" width="7.8" height="1.2" fill="#555"/></svg>
<div class="a" style="left:33px;top:296.9px;width:17px;height:15px;background:#4b86d4;"></div>
<svg class="a" style="left:33px;top:296.9px" width="17" height="15" viewBox="0 0 17 15"><g stroke="#d9d9d9" stroke-width="1.1" fill="none"><path d="M8.5 2.6V12.6M4.2 5.1L12.8 10.1M12.8 5.1L4.2 10.1"/></g><g fill="#d9d9d9"><circle cx="8.5" cy="3" r="1.3"/><circle cx="8.5" cy="12.2" r="1.3"/><circle cx="4.4" cy="5.2" r="1.3"/><circle cx="12.6" cy="5.2" r="1.3"/><circle cx="4.4" cy="10" r="1.3"/><circle cx="12.6" cy="10" r="1.3"/></g></svg>
<div class="a" style="left:33px;top:314.2px;width:17px;height:15px;background:#4b86d4;"></div>
<svg class="a" style="left:33px;top:314.2px" width="17" height="15" viewBox="0 0 17 15"><path d="M2.8 7.5Q8.5 1.6 14.2 7.5Q8.5 13.4 2.8 7.5Z" fill="#d9d9d9" stroke="#444" stroke-width=".5"/><circle cx="8.5" cy="7.5" r="2.6" fill="#3a3a3a"/><circle cx="9.2" cy="6.8" r="0.9" fill="#9a9a9a"/></svg>
<div class="a" style="left:35px;top:334px;width:13px;height:1px;background:#5a5a5a;"></div>
<svg class="a" style="left:36px;top:338px" width="11" height="12" viewBox="0 0 11 12"><rect x="0.5" y="0.5" width="9.4" height="10.6" fill="#d9d9d9" stroke="#bbb" stroke-width=".6"/><g fill="#444"><rect x="2.2" y="2.6" width="5.6" height="1.2"/><rect x="2.2" y="5" width="5.6" height="1.2"/><rect x="2.2" y="7.4" width="4" height="1.2"/></g></svg>
<svg class="a" style="left:36px;top:355px" width="11" height="12" viewBox="0 0 11 12"><rect x="0.5" y="0.5" width="9.4" height="10.6" fill="#d9d9d9"/></svg>
<svg class="a" style="left:36px;top:372px" width="11" height="12" viewBox="0 0 11 12"><rect x="0.9" y="0.9" width="8.8" height="10" fill="#3a3a3a" stroke="#d9d9d9" stroke-width="1"/><g fill="#d9d9d9"><rect x="2.8" y="3" width="3.6" height="1.1"/><rect x="2.8" y="5.2" width="2.6" height="1.1"/><rect x="2.8" y="7.4" width="3.6" height="1.1"/></g></svg>
<div class="a" style="left:35px;top:389px;width:13px;height:1px;background:#5a5a5a;"></div>
<svg class="a" style="left:35px;top:393px" width="14" height="14" viewBox="0 0 14 14"><path d="M0.6 0.6H11.4L7.4 5.4V10.6L4.6 9V5.4Z" fill="#7c7c7c"/><circle cx="9.6" cy="10.4" r="2.2" fill="#444" stroke="#8c8c8c" stroke-width="1.3"/></svg>
<div class="t" style="left:39.0px;top:414.5px;font-size:10px;line-height:12px;color:#4c5a9c;transform:scaleX(1.250);transform-origin:0 50%;">»</div>
<div class="a" style="left:52px;top:414px;width:56px;height:13px;background:#f3f3f3;"></div>
<div class="a" style="left:65px;top:415px;width:12px;height:11px;background:#d0d0d0;"></div>
<svg class="a" style="left:55px;top:417px" width="6" height="8" viewBox="0 0 6 8"><path d="M4.8 0.6L1.2 4L4.8 7.4" fill="none" stroke="#333" stroke-width="1.5"/></svg>
<svg class="a" style="left:98px;top:417px" width="6" height="8" viewBox="0 0 6 8"><path d="M1.2 0.6L4.8 4L1.2 7.4" fill="none" stroke="#333" stroke-width="1.5"/></svg>
<div class="t" style="left:99.5px;top:426.5px;font-size:10px;line-height:12px;color:#4c5a9c;transform:scaleX(1.250);transform-origin:0 50%;">»</div>
<div class="a" style="left:8px;top:391px;width:14px;height:14px;background:#484848;border-radius:2px;"></div>
<svg class="a" style="left:12px;top:394px" width="7" height="8" viewBox="0 0 7 8"><path d="M1 0.4L6 4L1 7.6Z" fill="#d9d9d9"/></svg>
<div class="a" style="left:3px;top:413.5px;width:27px;height:33px;background:linear-gradient(#5b7192,#4f7fc0 55%,#3d82dc);border-radius:3px 0 0 3px;"></div>
<div class="a" style="left:5px;top:419.5px;width:23px;height:21px;background:#6a717b;border:1.5px solid #4a4f58;border-radius:2px;"></div>
<div class="a" style="left:52px;top:122px;width:56px;height:15px;background:#464646;border-top:1px solid #5c5c5c;border-left:1px solid #585858;border-bottom:1px solid #5a5a5a;"></div>
<div class="a" style="left:53px;top:122px;width:55px;height:15px;overflow:hidden">
<div class="t" style="left:1px;top:1.5px;font-size:9.3px;line-height:12px;color:#ececec;transform:scaleX(.9);transform-origin:0 50%">Name (Sorted Ascending)</div></div>
<div class="a" style="left:52px;top:137px;width:56px;height:56px;background:#404040;"></div>
<div class="a" style="left:59px;top:143px;width:1px;height:41px;background:repeating-linear-gradient(#2a2a2a 0 1px,transparent 1px 2px)"></div>
<div class="a" style="left:60px;top:142.8px;width:5px;height:1px;background:repeating-linear-gradient(90deg,#2a2a2a 0 1px,transparent 1px 2px)"></div>
<svg class="a" style="left:66px;top:139px" width="11" height="8" viewBox="0 0 11 8"><path d="M0.3 4C2.4 0.4 8.2 0.4 10.3 4C8.2 7.6 2.4 7.6 0.3 4Z" fill="#ececec"/><circle cx="5.3" cy="4" r="2.1" fill="#2e2e2e"/><circle cx="5.9" cy="3.5" r="0.7" fill="#9a9a9a"/></svg>
<svg class="a" style="left:79px;top:139px" width="8" height="8" viewBox="0 0 8 8"><circle cx="4" cy="4" r="3.8" fill="#dcdcdc"/></svg>
<div class="a" style="left:90px;top:136.8px;width:18px;height:13.5px;background:#6b6b6b;overflow:hidden"><div class="t" style="left:1.5px;top:1px;font-size:9.3px;line-height:12px;color:#ececec;transform:scaleX(.9);transform-origin:0 50%;">Cylinder001</div></div>
<div class="a" style="left:60px;top:156.5px;width:5px;height:1px;background:repeating-linear-gradient(90deg,#2a2a2a 0 1px,transparent 1px 2px)"></div>
<svg class="a" style="left:66px;top:153px" width="11" height="8" viewBox="0 0 11 8"><path d="M0.3 4C2.4 0.4 8.2 0.4 10.3 4C8.2 7.6 2.4 7.6 0.3 4Z" fill="#ececec"/><circle cx="5.3" cy="4" r="2.1" fill="#2e2e2e"/><circle cx="5.9" cy="3.5" r="0.7" fill="#9a9a9a"/></svg>
<svg class="a" style="left:79px;top:153px" width="8" height="8" viewBox="0 0 8 8"><circle cx="4" cy="4" r="3.8" fill="#dcdcdc"/></svg>
<div class="a" style="left:90px;top:150.5px;width:18px;height:13.5px;background:#484848;overflow:hidden"><div class="t" style="left:1.5px;top:1px;font-size:9.3px;line-height:12px;color:#ececec;transform:scaleX(.9);transform-origin:0 50%;font-style:italic;">Plane001</div></div>
<div class="a" style="left:60px;top:169.8px;width:5px;height:1px;background:repeating-linear-gradient(90deg,#2a2a2a 0 1px,transparent 1px 2px)"></div>
<svg class="a" style="left:66px;top:166px" width="11" height="8" viewBox="0 0 11 8"><path d="M0.3 4C2.4 0.4 8.2 0.4 10.3 4C8.2 7.6 2.4 7.6 0.3 4Z" fill="#ececec"/><circle cx="5.3" cy="4" r="2.1" fill="#2e2e2e"/><circle cx="5.9" cy="3.5" r="0.7" fill="#9a9a9a"/></svg>
<svg class="a" style="left:79px;top:166px" width="8" height="8" viewBox="0 0 8 8"><circle cx="4" cy="4" r="3.8" fill="#dcdcdc"/></svg>
<div class="a" style="left:90px;top:163.8px;width:18px;height:13.5px;background:#484848;overflow:hidden"><div class="t" style="left:1.5px;top:1px;font-size:9.3px;line-height:12px;color:#ececec;transform:scaleX(.9);transform-origin:0 50%;font-style:italic;">Plane002</div></div>
<div class="a" style="left:60px;top:183.5px;width:5px;height:1px;background:repeating-linear-gradient(90deg,#2a2a2a 0 1px,transparent 1px 2px)"></div>
<svg class="a" style="left:66px;top:180px" width="11" height="8" viewBox="0 0 11 8"><path d="M0.3 4C2.4 0.4 8.2 0.4 10.3 4C8.2 7.6 2.4 7.6 0.3 4Z" fill="#ececec"/><circle cx="5.3" cy="4" r="2.1" fill="#2e2e2e"/><circle cx="5.9" cy="3.5" r="0.7" fill="#9a9a9a"/></svg>
<svg class="a" style="left:79px;top:180px" width="8" height="8" viewBox="0 0 8 8"><circle cx="4" cy="4" r="3.8" fill="#dcdcdc"/></svg>
<div class="a" style="left:90px;top:177.5px;width:18px;height:13.5px;background:#565656;overflow:hidden"><div class="t" style="left:1.5px;top:1px;font-size:9.3px;line-height:12px;color:#ececec;transform:scaleX(.9);transform-origin:0 50%;">Plane003</div></div>
<div class="a" id="vp" style="left:111px;top:76px;width:754.7px;height:371.7px;background:#837328"></div>
<div class="a" style="left:113px;top:78px;width:751.4px;height:368.2px;background:#313131"></div>
<div class="a" style="left:160px;top:78px;width:626.5px;height:368.2px;background:#f0f0f0"></div>
<svg class="a" style="left:113px;top:78px" width="751" height="368" viewBox="113 78 751 368">
<defs><filter id="bl" filterUnits="userSpaceOnUse" x="113" y="70" width="751" height="384"><feTurbulence type="fractalNoise" baseFrequency="0.11" numOctaves="2" seed="7" result="n"/><feDisplacementMap in="SourceGraphic" in2="n" scale="4.5" xChannelSelector="R" yChannelSelector="G" result="d"/><feGaussianBlur in="d" stdDeviation="1.25"/></filter>
<linearGradient id="mg" gradientUnits="userSpaceOnUse" x1="360" y1="0" x2="556" y2="0"><stop offset="0" stop-color="#7c2472"/><stop offset="0.05" stop-color="#a23a98"/><stop offset="0.16" stop-color="#bc4eae"/><stop offset="0.4" stop-color="#cc5cbe"/><stop offset="0.66" stop-color="#dc72ce"/><stop offset="0.88" stop-color="#d668c8"/><stop offset="0.97" stop-color="#c658b8"/><stop offset="1" stop-color="#ae46a2"/></linearGradient>
<radialGradient id="hl" gradientUnits="userSpaceOnUse" cx="474" cy="278" r="82"><stop offset="0" stop-color="#fff" stop-opacity=".26"/><stop offset="1" stop-color="#fff" stop-opacity="0"/></radialGradient>
<clipPath id="vc"><rect x="160" y="78" width="626.5" height="368.2"/></clipPath>
</defs>
<g stroke="#888" stroke-width="1.05">
<line x1="316.6" y1="78" x2="316.6" y2="446.2"/>
<line x1="473.4" y1="78" x2="473.4" y2="446.2"/>
<line x1="630.0" y1="78" x2="630.0" y2="446.2"/>
<line x1="160.5" y1="78" x2="160.5" y2="446.2" stroke="#a4a4a4"/>
<line x1="160" y1="158.4" x2="787" y2="158.4"/>
<line x1="160" y1="421.1" x2="787" y2="421.1"/>
</g>
<g clip-path="url(#vc)">
<g fill="none" stroke="#111" stroke-width="3.9" stroke-linecap="round" stroke-linejoin="round" filter="url(#bl)" opacity="0.88">
<polyline points="417.3,113 410.5,121 404.5,126.8 396.7,131.7 385,133.7 369.4,131.7 357.7,132.3 344,135.6 336.2,139.5 332.3,146.4 328.4,156 326.9,160 321,175.6 315.2,189.3 309.4,203 303.5,216.6 295.7,230.3 287.9,244 285.7,250 277.9,261.7 268.1,275.4 262.3,287.1 248.6,300.8 238.8,312.5 231,326.2 225.2,337.9 223.5,346 218.6,361.6 214.7,385 208.8,404.6 204.9,424 201,446"/>
<polyline points="396.7,131.7 401,137 404.5,142.5"/>
<polyline points="354.3,189.3 345,192 336.7,195.2 328,199 321,203 311.3,206.9"/>
<polyline points="362,218.6 358,228 354.3,236.2 349,242 344.5,246 340,254 338.4,261.7 328.7,273.4 317,287.1 307.2,298.8 299.4,304.7 297.4,314.5 293.5,326.2 287.7,337.9 287,346 275.2,361.6 261.6,377.3 249.8,392.9 240,406.5 232.3,424 227.4,437.8 230,446"/>
<polyline points="285.7,306.6 299.4,304.7"/>
<polyline points="216.6,435.8 227.4,437.8"/>
<polyline points="499.4,114.3 504,120 509.3,124.9 519,129.8 534.7,129.2 552.3,129.2 566,134.6 577.7,140.5 583.5,150.3 588.6,160 594.5,171.7 599.3,185.4 602.3,195.2 606,206 612,216.6 616,228.4 621.8,242 626,250 633.8,263.7 641.6,279.3 651.3,293 663,306.6 676.7,320.3 686.5,334 688.9,346 696.7,365.5 704.5,389 710.4,410.5 715.3,428 718.2,446"/>
<polyline points="517,130 521,142.5"/>
<polyline points="597,196 603,204 607,211"/>
<polyline points="555.4,226.4 563.2,238.1 569.3,250 579,263.7 590.8,279.3 600.5,295 612.3,304.7 616.2,314.5 622,328 626,341.8 626.4,346 632.3,359.7 644,375.3 657.7,390.9 671.3,402.6 681,414.4 689,426 692.8,439.8 693.8,446"/>
<polyline points="612.3,304.7 627.9,308.6"/>
<polyline points="383.4,379.4 375.2,398 368,417 361,438 358.7,446"/>
<polyline points="527.5,379.4 534.5,400.5 541.5,416.9 548.6,431 555.6,446"/>
<polyline points="413.2,78.7 416,85.6 421.4,92.4 429.6,99.2 437.9,104.7 444.7,108"/>
<polyline points="498,78.7 498,87 494,95 485.7,100.6 477.5,104.7 472,108"/>
<polyline points="442,90.4 455,91.5 468,93"/>
<polyline points="450,78.5 466,79"/>
</g>
<g fill="none" stroke="#000" stroke-width="5.0" stroke-linecap="butt" stroke-linejoin="round" filter="url(#bl)" opacity="0.42" stroke-dasharray="7 5 4 9 10 6 5 8">
<polyline points="417.3,113 410.5,121 404.5,126.8 396.7,131.7 385,133.7 369.4,131.7 357.7,132.3 344,135.6 336.2,139.5 332.3,146.4 328.4,156 326.9,160 321,175.6 315.2,189.3 309.4,203 303.5,216.6 295.7,230.3 287.9,244 285.7,250 277.9,261.7 268.1,275.4 262.3,287.1 248.6,300.8 238.8,312.5 231,326.2 225.2,337.9 223.5,346 218.6,361.6 214.7,385 208.8,404.6 204.9,424 201,446"/>
<polyline points="396.7,131.7 401,137 404.5,142.5"/>
<polyline points="354.3,189.3 345,192 336.7,195.2 328,199 321,203 311.3,206.9"/>
<polyline points="362,218.6 358,228 354.3,236.2 349,242 344.5,246 340,254 338.4,261.7 328.7,273.4 317,287.1 307.2,298.8 299.4,304.7 297.4,314.5 293.5,326.2 287.7,337.9 287,346 275.2,361.6 261.6,377.3 249.8,392.9 240,406.5 232.3,424 227.4,437.8 230,446"/>
<polyline points="285.7,306.6 299.4,304.7"/>
<polyline points="216.6,435.8 227.4,437.8"/>
<polyline points="499.4,114.3 504,120 509.3,124.9 519,129.8 534.7,129.2 552.3,129.2 566,134.6 577.7,140.5 583.5,150.3 588.6,160 594.5,171.7 599.3,185.4 602.3,195.2 606,206 612,216.6 616,228.4 621.8,242 626,250 633.8,263.7 641.6,279.3 651.3,293 663,306.6 676.7,320.3 686.5,334 688.9,346 696.7,365.5 704.5,389 710.4,410.5 715.3,428 718.2,446"/>
<polyline points="517,130 521,142.5"/>
<polyline points="597,196 603,204 607,211"/>
<polyline points="555.4,226.4 563.2,238.1 569.3,250 579,263.7 590.8,279.3 600.5,295 612.3,304.7 616.2,314.5 622,328 626,341.8 626.4,346 632.3,359.7 644,375.3 657.7,390.9 671.3,402.6 681,414.4 689,426 692.8,439.8 693.8,446"/>
<polyline points="612.3,304.7 627.9,308.6"/>
<polyline points="383.4,379.4 375.2,398 368,417 361,438 358.7,446"/>
<polyline points="527.5,379.4 534.5,400.5 541.5,416.9 548.6,431 555.6,446"/>
<polyline points="413.2,78.7 416,85.6 421.4,92.4 429.6,99.2 437.9,104.7 444.7,108"/>
<polyline points="498,78.7 498,87 494,95 485.7,100.6 477.5,104.7 472,108"/>
<polyline points="442,90.4 455,91.5 468,93"/>
<polyline points="450,78.5 466,79"/>
</g>
<g fill="none" stroke="#111" stroke-width="2.8" stroke-linecap="round" stroke-linejoin="round" filter="url(#bl)" opacity="0.72">
<polyline points="419.7,381.7 426.7,395.8 433.7,412"/>
<polyline points="403.3,407.5 412.6,419.2 422,431 431.4,442.6"/>
<polyline points="494.7,381.7 490,398"/>
<polyline points="508.7,402.8 501.7,416.9 494.7,428.6 486.5,440.3"/>
</g>
<g fill="none" stroke="#000" stroke-width="3.4" stroke-linecap="butt" stroke-linejoin="round" filter="url(#bl)" opacity="0.3" stroke-dasharray="7 5 4 9 10 6 5 8">
<polyline points="419.7,381.7 426.7,395.8 433.7,412"/>
<polyline points="403.3,407.5 412.6,419.2 422,431 431.4,442.6"/>
<polyline points="494.7,381.7 490,398"/>
<polyline points="508.7,402.8 501.7,416.9 494.7,428.6 486.5,440.3"/>
</g>
<g filter="url(#bl)" opacity=".75"><rect x="454.8" y="379" width="2.6" height="68" fill="#4a4a4a"/></g>
</g>
<polyline fill="none" stroke="#1a0a18" stroke-width="2.4" points="361.8,165.6 360.3,188.4 358.8,210.8 367.2,248.7 377.4,281.0 389.9,302.4 390.7,351.3 382.2,378.3"/>
<polyline fill="none" stroke="#1a0a18" stroke-width="3.2" points="377.3,281.0 389.8,302.4 390.6,351.3"/>
<polyline fill="none" stroke="#1a0a18" stroke-width="1.8" opacity=".85" points="417.0,109.4 413.7,143.4"/>
<polyline fill="none" stroke="#1a0a18" stroke-width="2" opacity=".8" points="536.8,281.0 524.1,302.4 524.1,351.3"/>
<polygon fill="url(#mg)" points="417.5,109.4 414.2,143.4 362.6,165.6 361.1,188.4 359.6,210.8 368.0,248.7 378.2,281.0 390.7,302.4 391.5,351.3 383.0,378.3 532.0,378.3 523.5,351.3 523.5,302.4 536.2,281.0 548.0,248.7 555.8,210.8 554.7,188.4 553.0,165.6 500.6,143.4 497.7,109.4"/>
<polygon fill="url(#hl)" points="417.5,109.4 414.2,143.4 362.6,165.6 361.1,188.4 359.6,210.8 368.0,248.7 378.2,281.0 390.7,302.4 391.5,351.3 383.0,378.3 532.0,378.3 523.5,351.3 523.5,302.4 536.2,281.0 548.0,248.7 555.8,210.8 554.7,188.4 553.0,165.6 500.6,143.4 497.7,109.4"/>
<polygon fill="#fff" fill-opacity="0.03" points="414.2,143.4 416.8,143.4 368.3,165.6 362.6,165.6"/>
<polygon fill="#fff" fill-opacity="0.03" points="416.8,143.4 424.3,143.4 384.9,165.6 368.3,165.6"/>
<polygon fill="#fff" fill-opacity="0.03" points="424.3,143.4 435.8,143.4 410.2,165.6 384.9,165.6"/>
<polygon fill="#fff" fill-opacity="0.03" points="435.8,143.4 449.9,143.4 441.3,165.6 410.2,165.6"/>
<polygon fill="#fff" fill-opacity="0.03" points="449.9,143.4 464.9,143.4 474.3,165.6 441.3,165.6"/>
<polygon fill="#fff" fill-opacity="0.03" points="464.9,143.4 479.0,143.4 505.4,165.6 474.3,165.6"/>
<polygon fill="#fff" fill-opacity="0.03" points="479.0,143.4 490.5,143.4 530.7,165.6 505.4,165.6"/>
<polygon fill="#fff" fill-opacity="0.03" points="490.5,143.4 498.0,143.4 547.3,165.6 530.7,165.6"/>
<polygon fill="#fff" fill-opacity="0.03" points="498.0,143.4 500.6,143.4 553.0,165.6 547.3,165.6"/>
<g fill="none" stroke="#fae6f7" stroke-width="0.95" stroke-opacity=".9">
<line x1="417.5" y1="109.4" x2="497.7" y2="109.4"/>
<line x1="414.2" y1="143.4" x2="500.6" y2="143.4"/>
<line x1="362.6" y1="165.6" x2="553.0" y2="165.6"/>
<line x1="361.1" y1="188.4" x2="554.7" y2="188.4"/>
<line x1="359.6" y1="210.8" x2="555.8" y2="210.8"/>
<line x1="368.0" y1="248.7" x2="548.0" y2="248.7"/>
<line x1="378.2" y1="281.0" x2="536.2" y2="281.0"/>
<line x1="390.7" y1="302.4" x2="523.5" y2="302.4"/>
<line x1="391.5" y1="351.3" x2="523.5" y2="351.3"/>
<line x1="383.0" y1="378.3" x2="532.0" y2="378.3"/>
<polyline points="417.5,109.4 414.2,143.4 362.6,165.6 361.1,188.4 359.6,210.8 368.0,248.7 378.2,281.0 390.7,302.4 391.5,351.3 383.0,378.3"/>
<polyline points="419.9,109.4 416.8,143.4 368.3,165.6 366.9,188.4 365.5,210.8 373.4,248.7 383.0,281.0 394.7,302.4 395.5,351.3 387.5,378.3"/>
<polyline points="426.9,109.4 424.3,143.4 384.9,165.6 383.7,188.4 382.6,210.8 389.1,248.7 396.7,281.0 406.2,302.4 406.9,351.3 400.4,378.3"/>
<polyline points="437.6,109.4 435.8,143.4 410.2,165.6 409.5,188.4 408.6,210.8 413.0,248.7 417.7,281.0 423.9,302.4 424.5,351.3 420.2,378.3"/>
<polyline points="450.6,109.4 449.9,143.4 441.3,165.6 441.1,188.4 440.7,210.8 442.4,248.7 443.5,281.0 445.6,302.4 446.0,351.3 444.6,378.3"/>
<polyline points="464.6,109.4 464.9,143.4 474.3,165.6 474.7,188.4 474.7,210.8 473.6,248.7 470.9,281.0 468.6,302.4 469.0,351.3 470.4,378.3"/>
<polyline points="477.7,109.4 479.0,143.4 505.4,165.6 506.3,188.4 506.8,210.8 503.0,248.7 496.7,281.0 490.3,302.4 490.5,351.3 494.8,378.3"/>
<polyline points="488.3,109.4 490.5,143.4 530.7,165.6 532.1,188.4 532.8,210.8 526.9,248.7 517.7,281.0 508.0,302.4 508.1,351.3 514.6,378.3"/>
<polyline points="495.3,109.4 498.0,143.4 547.3,165.6 548.9,188.4 549.9,210.8 542.6,248.7 531.4,281.0 519.5,302.4 519.5,351.3 527.5,378.3"/>
<polyline points="497.7,109.4 500.6,143.4 553.0,165.6 554.7,188.4 555.8,210.8 548.0,248.7 536.2,281.0 523.5,302.4 523.5,351.3 532.0,378.3"/>
</g>
<polygon points="457.5,108.6 457.5,143.4 493,143.4" fill="#ffae68" fill-opacity="0.5"/>
<g fill="none" stroke-width="1">
<line x1="457.5" y1="78" x2="457.5" y2="108" stroke="#2e7e2e" stroke-opacity=".85"/>
<path d="M457.5 93.5 L507.2 143.4 M457.5 108.6 L493 143.4 M457.5 108.6 V143.4 H493" stroke="#f8d040" stroke-width="1" stroke-opacity=".9"/>
<line x1="500" y1="143.4" x2="525" y2="143.4" stroke="#d01818"/>
</g>
<rect x="523.5" y="142" width="3" height="3" fill="#e01010"/>
<text x="528.5" y="145" font-size="8" fill="#d8c020" font-family="Liberation Sans, sans-serif">x</text>
<rect x="416.2" y="108.1" width="2.6" height="2.6" fill="#4a4aee"/>
<rect x="418.6" y="108.1" width="2.6" height="2.6" fill="#4a4aee"/>
<rect x="425.6" y="108.1" width="2.6" height="2.6" fill="#4a4aee"/>
<rect x="436.2" y="108.1" width="2.6" height="2.6" fill="#4a4aee"/>
<rect x="449.3" y="108.1" width="2.6" height="2.6" fill="#4a4aee"/>
<rect x="463.3" y="108.1" width="2.6" height="2.6" fill="#4a4aee"/>
<rect x="476.4" y="108.1" width="2.6" height="2.6" fill="#4a4aee"/>
<rect x="487.0" y="108.1" width="2.6" height="2.6" fill="#4a4aee"/>
<rect x="494.0" y="108.1" width="2.6" height="2.6" fill="#4a4aee"/>
<rect x="496.4" y="108.1" width="2.6" height="2.6" fill="#4a4aee"/>
<rect x="412.9" y="142.1" width="2.6" height="2.6" fill="#e01010"/>
<rect x="415.5" y="142.1" width="2.6" height="2.6" fill="#e01010"/>
<rect x="423.0" y="142.1" width="2.6" height="2.6" fill="#e01010"/>
<rect x="434.5" y="142.1" width="2.6" height="2.6" fill="#e01010"/>
<rect x="448.6" y="142.1" width="2.6" height="2.6" fill="#e01010"/>
<rect x="463.6" y="142.1" width="2.6" height="2.6" fill="#e01010"/>
<rect x="477.7" y="142.1" width="2.6" height="2.6" fill="#e01010"/>
<rect x="489.2" y="142.1" width="2.6" height="2.6" fill="#e01010"/>
<rect x="496.7" y="142.1" width="2.6" height="2.6" fill="#e01010"/>
<rect x="499.3" y="142.1" width="2.6" height="2.6" fill="#e01010"/>
<rect x="361.3" y="164.3" width="2.6" height="2.6" fill="#4a4aee"/>
<rect x="367.0" y="164.3" width="2.6" height="2.6" fill="#4a4aee"/>
<rect x="383.6" y="164.3" width="2.6" height="2.6" fill="#4a4aee"/>
<rect x="408.9" y="164.3" width="2.6" height="2.6" fill="#4a4aee"/>
<rect x="440.0" y="164.3" width="2.6" height="2.6" fill="#4a4aee"/>
<rect x="473.0" y="164.3" width="2.6" height="2.6" fill="#4a4aee"/>
<rect x="504.1" y="164.3" width="2.6" height="2.6" fill="#4a4aee"/>
<rect x="529.4" y="164.3" width="2.6" height="2.6" fill="#4a4aee"/>
<rect x="546.0" y="164.3" width="2.6" height="2.6" fill="#4a4aee"/>
<rect x="551.7" y="164.3" width="2.6" height="2.6" fill="#4a4aee"/>
<rect x="359.8" y="187.1" width="2.6" height="2.6" fill="#4a4aee"/>
<rect x="365.6" y="187.1" width="2.6" height="2.6" fill="#4a4aee"/>
<rect x="382.4" y="187.1" width="2.6" height="2.6" fill="#4a4aee"/>
<rect x="408.2" y="187.1" width="2.6" height="2.6" fill="#4a4aee"/>
<rect x="439.8" y="187.1" width="2.6" height="2.6" fill="#4a4aee"/>
<rect x="473.4" y="187.1" width="2.6" height="2.6" fill="#4a4aee"/>
<rect x="505.0" y="187.1" width="2.6" height="2.6" fill="#4a4aee"/>
<rect x="530.8" y="187.1" width="2.6" height="2.6" fill="#4a4aee"/>
<rect x="547.6" y="187.1" width="2.6" height="2.6" fill="#4a4aee"/>
<rect x="553.4" y="187.1" width="2.6" height="2.6" fill="#4a4aee"/>
<rect x="358.3" y="209.5" width="2.6" height="2.6" fill="#4a4aee"/>
<rect x="364.2" y="209.5" width="2.6" height="2.6" fill="#4a4aee"/>
<rect x="381.3" y="209.5" width="2.6" height="2.6" fill="#4a4aee"/>
<rect x="407.3" y="209.5" width="2.6" height="2.6" fill="#4a4aee"/>
<rect x="439.4" y="209.5" width="2.6" height="2.6" fill="#4a4aee"/>
<rect x="473.4" y="209.5" width="2.6" height="2.6" fill="#4a4aee"/>
<rect x="505.4" y="209.5" width="2.6" height="2.6" fill="#4a4aee"/>
<rect x="531.5" y="209.5" width="2.6" height="2.6" fill="#4a4aee"/>
<rect x="548.6" y="209.5" width="2.6" height="2.6" fill="#4a4aee"/>
<rect x="554.5" y="209.5" width="2.6" height="2.6" fill="#4a4aee"/>
<rect x="366.7" y="247.4" width="2.6" height="2.6" fill="#4a4aee"/>
<rect x="372.1" y="247.4" width="2.6" height="2.6" fill="#4a4aee"/>
<rect x="387.8" y="247.4" width="2.6" height="2.6" fill="#4a4aee"/>
<rect x="411.7" y="247.4" width="2.6" height="2.6" fill="#4a4aee"/>
<rect x="441.1" y="247.4" width="2.6" height="2.6" fill="#4a4aee"/>
<rect x="472.3" y="247.4" width="2.6" height="2.6" fill="#4a4aee"/>
<rect x="501.7" y="247.4" width="2.6" height="2.6" fill="#4a4aee"/>
<rect x="525.6" y="247.4" width="2.6" height="2.6" fill="#4a4aee"/>
<rect x="541.3" y="247.4" width="2.6" height="2.6" fill="#4a4aee"/>
<rect x="546.7" y="247.4" width="2.6" height="2.6" fill="#4a4aee"/>
<rect x="376.9" y="279.7" width="2.6" height="2.6" fill="#4a4aee"/>
<rect x="381.7" y="279.7" width="2.6" height="2.6" fill="#4a4aee"/>
<rect x="395.4" y="279.7" width="2.6" height="2.6" fill="#4a4aee"/>
<rect x="416.4" y="279.7" width="2.6" height="2.6" fill="#4a4aee"/>
<rect x="442.2" y="279.7" width="2.6" height="2.6" fill="#4a4aee"/>
<rect x="469.6" y="279.7" width="2.6" height="2.6" fill="#4a4aee"/>
<rect x="495.4" y="279.7" width="2.6" height="2.6" fill="#4a4aee"/>
<rect x="516.4" y="279.7" width="2.6" height="2.6" fill="#4a4aee"/>
<rect x="530.1" y="279.7" width="2.6" height="2.6" fill="#4a4aee"/>
<rect x="534.9" y="279.7" width="2.6" height="2.6" fill="#4a4aee"/>
<rect x="389.4" y="301.1" width="2.6" height="2.6" fill="#4a4aee"/>
<rect x="393.4" y="301.1" width="2.6" height="2.6" fill="#4a4aee"/>
<rect x="404.9" y="301.1" width="2.6" height="2.6" fill="#4a4aee"/>
<rect x="422.6" y="301.1" width="2.6" height="2.6" fill="#4a4aee"/>
<rect x="444.3" y="301.1" width="2.6" height="2.6" fill="#4a4aee"/>
<rect x="467.3" y="301.1" width="2.6" height="2.6" fill="#4a4aee"/>
<rect x="489.0" y="301.1" width="2.6" height="2.6" fill="#4a4aee"/>
<rect x="506.7" y="301.1" width="2.6" height="2.6" fill="#4a4aee"/>
<rect x="518.2" y="301.1" width="2.6" height="2.6" fill="#4a4aee"/>
<rect x="522.2" y="301.1" width="2.6" height="2.6" fill="#4a4aee"/>
<rect x="390.2" y="350.0" width="2.6" height="2.6" fill="#4a4aee"/>
<rect x="394.2" y="350.0" width="2.6" height="2.6" fill="#4a4aee"/>
<rect x="405.6" y="350.0" width="2.6" height="2.6" fill="#4a4aee"/>
<rect x="423.2" y="350.0" width="2.6" height="2.6" fill="#4a4aee"/>
<rect x="444.7" y="350.0" width="2.6" height="2.6" fill="#4a4aee"/>
<rect x="467.7" y="350.0" width="2.6" height="2.6" fill="#4a4aee"/>
<rect x="489.2" y="350.0" width="2.6" height="2.6" fill="#4a4aee"/>
<rect x="506.8" y="350.0" width="2.6" height="2.6" fill="#4a4aee"/>
<rect x="518.2" y="350.0" width="2.6" height="2.6" fill="#4a4aee"/>
<rect x="522.2" y="350.0" width="2.6" height="2.6" fill="#4a4aee"/>
<rect x="381.7" y="377.0" width="2.6" height="2.6" fill="#4a4aee"/>
<rect x="386.2" y="377.0" width="2.6" height="2.6" fill="#4a4aee"/>
<rect x="399.1" y="377.0" width="2.6" height="2.6" fill="#4a4aee"/>
<rect x="418.9" y="377.0" width="2.6" height="2.6" fill="#4a4aee"/>
<rect x="443.3" y="377.0" width="2.6" height="2.6" fill="#4a4aee"/>
<rect x="469.1" y="377.0" width="2.6" height="2.6" fill="#4a4aee"/>
<rect x="493.4" y="377.0" width="2.6" height="2.6" fill="#4a4aee"/>
<rect x="513.3" y="377.0" width="2.6" height="2.6" fill="#4a4aee"/>
<rect x="526.2" y="377.0" width="2.6" height="2.6" fill="#4a4aee"/>
<rect x="530.7" y="377.0" width="2.6" height="2.6" fill="#4a4aee"/>
<g>
<ellipse cx="822.5" cy="131.3" rx="29.5" ry="1.9" fill="none" stroke="#8a8f96" stroke-width="0.9" opacity=".85"/>
<linearGradient id="vcg" x1="0" y1="0" x2="0" y2="1"><stop offset="0" stop-color="#8e8e8e"/><stop offset="1" stop-color="#7a7a7a"/></linearGradient>
<rect x="811.3" y="106.9" width="23.4" height="23" fill="url(#vcg)"/>
<rect x="811.3" y="129.4" width="23.4" height="1.4" fill="#2a2a2a" opacity=".7"/>
<text x="823" y="121" text-anchor="middle" font-size="5.6" font-weight="bold" fill="#55585e" font-family="Liberation Sans, sans-serif" textLength="15" lengthAdjust="spacingAndGlyphs">FRONT</text>
</g>
<g stroke-width="1.5" fill="none"><line x1="131.6" y1="427.6" x2="131.6" y2="408" stroke="#2424a8"/><line x1="131" y1="427.6" x2="151.6" y2="427.6" stroke="#b01818"/></g>
<text x="131" y="409" font-size="7" font-weight="bold" fill="#2a2ab4" font-family="Liberation Sans, sans-serif">z</text>
<text x="150.6" y="428.6" font-size="7" font-weight="bold" fill="#c81c1c" font-family="Liberation Sans, sans-serif">x</text>
<text x="131.6" y="428.8" font-size="7" font-weight="bold" fill="#1c9a1c" font-family="Liberation Sans, sans-serif">y</text>
</svg>
<div class="t" style="left:114.5px;top:82.8px;font-size:9.2px;line-height:11px;color:#c4c4c4;transform:scaleX(1.243);transform-origin:0 50%;letter-spacing:0.8px;">[+]</div>
<div class="t" style="left:131.5px;top:82.8px;font-size:9.2px;line-height:11px;color:#c4c4c4;transform:scaleX(0.986);transform-origin:0 50%;">[Front ]</div>
<div class="t" style="left:162.9px;top:82.8px;font-size:9.2px;line-height:11px;color:#4a4a4a;transform:scaleX(0.925);transform-origin:0 50%;">[Standard ]</div>
<div class="t" style="left:207.9px;top:82.8px;font-size:9.2px;line-height:11px;color:#4a4a4a;transform:scaleX(0.877);transform-origin:0 50%;">[Edged Faces ]</div>

<div class="a" style="left:866px;top:76px;width:158px;height:376px;background:#444;"></div>
<div class="a" style="left:870px;top:77px;width:154px;height:3px;background:repeating-linear-gradient(90deg,#9a9a9a 0 1px,transparent 1px 2px);opacity:.75"></div>
<div class="a" style="left:870px;top:78px;width:154px;height:1px;background:#444;"></div>
<div class="a" style="left:869px;top:83px;width:155px;height:20px;background:#404040;"></div>
<div class="a" style="left:870px;top:83px;width:23px;height:20px;background:#3a3a3a;border-radius:2px 2px 0 0;"></div>
<div class="a" style="left:894px;top:83px;width:23px;height:20px;background:#464646;border-radius:2px 2px 0 0;"></div>
<div class="a" style="left:918px;top:83px;width:23px;height:20px;background:#3a3a3a;border-radius:2px 2px 0 0;"></div>
<div class="a" style="left:942px;top:83px;width:23px;height:20px;background:#3a3a3a;border-radius:2px 2px 0 0;"></div>
<div class="a" style="left:966px;top:83px;width:23px;height:20px;background:#3a3a3a;border-radius:2px 2px 0 0;"></div>
<div class="a" style="left:990px;top:83px;width:23px;height:20px;background:#3a3a3a;border-radius:2px 2px 0 0;"></div>
<div class="a" style="left:869px;top:103px;width:155px;height:1px;background:#484848;"></div>
<svg class="a" style="left:874px;top:87px" width="14" height="13" viewBox="0 0 14 13"><path d="M6.6 0.8V11.8M0.8 6.3H12.4" stroke="#c8c8c8" stroke-width="1.15" fill="none"/></svg>
<svg class="a" style="left:897px;top:85px" width="16" height="16" viewBox="0 0 16 16"><rect x="2.2" y="2.4" width="10.4" height="10.6" fill="none" stroke="#33c3c8" stroke-width="1"/><path d="M4.6 12.6Q5 6 11 5" fill="none" stroke="#d9d9d9" stroke-width="1.5"/><g fill="#33c3c8"><circle cx="2.2" cy="2.4" r="1.5"/><circle cx="12.6" cy="2.4" r="1.5"/><circle cx="2.2" cy="13" r="1.5"/><circle cx="12.6" cy="13" r="1.5"/></g></svg>
<svg class="a" style="left:922px;top:86px" width="14" height="15" viewBox="0 0 14 15"><rect x="2" y="0.6" width="9.4" height="4.4" fill="#9c9c9c"/><path d="M6.7 5V7.6M2.2 10.6V7.8H11.2V10.6" fill="none" stroke="#33c3c8" stroke-width="1"/><rect x="0.6" y="10.8" width="3.4" height="2.6" fill="#33c3c8"/><rect x="9.4" y="10.8" width="3.4" height="2.6" fill="#33c3c8"/></svg>
<svg class="a" style="left:944px;top:86px" width="18" height="14" viewBox="0 0 18 14"><circle cx="6.4" cy="7" r="5.2" fill="#2d6468"/><circle cx="10" cy="7" r="5.2" fill="#a8a8a8"/></svg>
<svg class="a" style="left:970px;top:87px" width="14" height="13" viewBox="0 0 14 13"><rect x="0.6" y="0.6" width="12.4" height="7.4" fill="#a4a4a4"/><rect x="4.6" y="10" width="4.6" height="1.2" fill="#a4a4a4"/></svg>
<svg class="a" style="left:993px;top:86px" width="14" height="15" viewBox="0 0 14 15"><path d="M2.2 1.2a3 3 0 0 0 2.6 4.6L10.8 12.6a1.2 1.2 0 0 0 1.8 -1.6L6.4 4.4a3 3 0 0 0 -1.6 -3.6L5 3.2L3.4 3.8Z" fill="#a4a4a4"/></svg>
<div class="a" style="left:873px;top:109px;width:132px;height:13px;background:#5e5e5e;"></div>
<div class="t" style="left:876.5px;top:110.8px;font-size:8.7px;line-height:10px;color:#d8d8d8;transform:scaleX(0.927);transform-origin:0 50%;">Cylinder001</div>
<div class="a" style="left:1009px;top:108px;width:13px;height:15px;background:#d95fca;border:1px solid #2a2a2a;"></div>
<div class="a" style="left:873px;top:131px;width:149px;height:14px;background:#5e5e5e;"></div>
<div class="t" style="left:874.5px;top:133.0px;font-size:8.7px;line-height:10px;color:#e0e0e0;transform:scaleX(0.939);transform-origin:0 50%;">Modifier List</div>
<svg class="a" style="left:1012.5px;top:136.5px" width="5" height="3" viewBox="0 0 5 3"><path d="M0 0H5L2.5 3Z" fill="#e0e0e0"/></svg>
<div class="a" style="left:873px;top:149px;width:150px;height:95px;background:#444;border:1px solid #dadada;"></div>
<div class="a" style="left:874px;top:226px;width:148px;height:1px;background:#c8c8c8;"></div>
<svg class="a" style="left:878px;top:154px" width="7" height="6" viewBox="0 0 7 6"><path d="M0.4 0.6H6.6L3.5 5.4Z" fill="#e8e8e8"/></svg>
<div class="t" style="left:889.0px;top:152.0px;font-size:8.7px;line-height:10px;color:#e8e8e8;transform:scaleX(0.937);transform-origin:0 50%;">Editable Poly</div>
<svg class="a" style="left:1009px;top:153px" width="9" height="9" viewBox="0 0 9 9"><g fill="#e8e8e8"><circle cx="2" cy="4.4" r="1.5"/><circle cx="6" cy="1.8" r="1.5"/><circle cx="6.4" cy="6.8" r="1.5"/></g><path d="M2 4.4L6 1.8M2 4.4L6.4 6.8" stroke="#e8e8e8" stroke-width=".6"/></svg>
<div class="a" style="left:896px;top:163px;width:126px;height:12px;background:#4b86d4;"></div>
<div class="t" style="left:897.5px;top:164.3px;font-size:8.7px;line-height:10px;color:#fff;transform:scaleX(0.974);transform-origin:0 50%;">Vertex</div>
<svg class="a" style="left:1009px;top:165px" width="9" height="9" viewBox="0 0 9 9"><g fill="#e8e8e8"><circle cx="2" cy="4.4" r="1.5"/><circle cx="6" cy="1.8" r="1.5"/><circle cx="6.4" cy="6.8" r="1.5"/></g><path d="M2 4.4L6 1.8M2 4.4L6.4 6.8" stroke="#e8e8e8" stroke-width=".6"/></svg>
<div class="a" style="left:881px;top:161px;width:1px;height:60px;background:repeating-linear-gradient(#1a1a1a 0 1px,transparent 1px 2px)"></div>
<div class="t" style="left:897.5px;top:177.7px;font-size:8.7px;line-height:10px;color:#e8e8e8;transform:scaleX(0.887);transform-origin:0 50%;">Edge</div>
<div class="t" style="left:897.5px;top:190.3px;font-size:8.7px;line-height:10px;color:#e8e8e8;">Border</div>
<div class="t" style="left:897.5px;top:203.1px;font-size:8.7px;line-height:10px;color:#e8e8e8;transform:scaleX(0.971);transform-origin:0 50%;">Polygon</div>
<div class="t" style="left:897.5px;top:215.8px;font-size:8.7px;line-height:10px;color:#e8e8e8;transform:scaleX(0.941);transform-origin:0 50%;">Element</div>
<div class="a" style="left:882px;top:169px;width:13px;height:1px;background:repeating-linear-gradient(90deg,#1a1a1a 0 1px,transparent 1px 2px)"></div>
<div class="a" style="left:882px;top:183px;width:13px;height:1px;background:repeating-linear-gradient(90deg,#1a1a1a 0 1px,transparent 1px 2px)"></div>
<div class="a" style="left:882px;top:195px;width:13px;height:1px;background:repeating-linear-gradient(90deg,#1a1a1a 0 1px,transparent 1px 2px)"></div>
<div class="a" style="left:882px;top:208px;width:13px;height:1px;background:repeating-linear-gradient(90deg,#1a1a1a 0 1px,transparent 1px 2px)"></div>
<div class="a" style="left:882px;top:221px;width:13px;height:1px;background:repeating-linear-gradient(90deg,#1a1a1a 0 1px,transparent 1px 2px)"></div>
<svg class="a" style="left:876px;top:252px" width="10" height="11" viewBox="0 0 10 11"><path d="M5.6 0.8L9.2 4.4L7.8 4.8L5.6 7L5.2 9L3.6 7.4L0.8 10.2L0.6 10L3 6.8L1.4 5.2L3.4 4.8L5.6 2.6Z" fill="#d9d9d9"/></svg>
<div class="a" style="left:895px;top:251px;width:1px;height:13px;background:repeating-linear-gradient(#151515 0 2px,transparent 2px 3px)"></div>
<svg class="a" style="left:905px;top:250px" width="7" height="14" viewBox="0 0 7 14"><rect x="0.6" y="0.6" width="5.8" height="1.4" fill="#d9d9d9"/><path d="M1.7 2V10.6a1.8 1.8 0 0 0 3.6 0V2Z" fill="#3c3c3c" stroke="#d9d9d9" stroke-width=".9"/><path d="M2.3 7V10.6a1.2 1.2 0 0 0 2.4 0V7Z" fill="#33c3c8"/></svg>
<div class="a" style="left:921px;top:251px;width:1px;height:13px;background:repeating-linear-gradient(#151515 0 2px,transparent 2px 3px)"></div>
<svg class="a" style="left:929px;top:251px" width="13" height="13" viewBox="0 0 13 13"><g fill="#555" stroke="#303030" stroke-width=".8"><circle cx="4" cy="4" r="3"/><circle cx="9" cy="5.6" r="3"/><circle cx="6.6" cy="9.4" r="3"/></g></svg>
<svg class="a" style="left:949px;top:251px" width="10" height="13" viewBox="0 0 10 13"><path d="M1.4 3.2H8.6V11.4Q8.6 12.4 7.6 12.4H2.4Q1.4 12.4 1.4 11.4Z" fill="none" stroke="#9a9a9a" stroke-width="1"/><path d="M0.4 2.6H9.6M3.4 2.2V0.8H6.6V2.2M3.6 5V10.6M6.4 5V10.6" fill="none" stroke="#9a9a9a" stroke-width="1"/></svg>
<div class="a" style="left:967px;top:251px;width:1px;height:13px;background:repeating-linear-gradient(#151515 0 2px,transparent 2px 3px)"></div>
<svg class="a" style="left:975px;top:251px" width="12" height="13" viewBox="0 0 12 13"><rect x="0.6" y="1.6" width="9.6" height="10.6" fill="#d9d9d9"/><g fill="#444"><rect x="2" y="3.6" width="2" height="1.6"/><rect x="5" y="3.6" width="3.6" height="1.6"/><rect x="2" y="6.4" width="2" height="1.6"/><rect x="5" y="6.4" width="3.6" height="1.6"/><rect x="2" y="9.2" width="2" height="1.6"/><rect x="5" y="9.2" width="3.6" height="1.6"/></g><line x1="5.4" y1="6.6" x2="11" y2="0.8" stroke="#f2a91c" stroke-width="1.6"/></svg>
<div class="a" style="left:876px;top:279px;width:63px;height:1px;background:#5e5e5e;"></div>
<div class="a" style="left:955px;top:279px;width:64px;height:1px;background:#5e5e5e;"></div>
<div class="a" style="left:942px;top:278px;width:11px;height:2px;background:repeating-linear-gradient(90deg,#b0b0b0 0 1px,transparent 1px 2px);opacity:.8"></div>
<div class="a" style="left:872.5px;top:285.5px;width:144px;height:160px;background:#515151;"></div>
<svg class="a" style="left:877px;top:291px" width="5" height="4" viewBox="0 0 5 4"><path d="M0.2 0.3H4.8L2.5 3.6Z" fill="#c0c0c0"/></svg>
<div class="t" style="left:886.0px;top:288.0px;font-size:8.7px;line-height:10px;color:#f0f0f0;transform:scaleX(1.036);transform-origin:0 50%;font-weight:bold;">Selection</div>
<div class="a" style="left:1007px;top:290px;width:3px;height:5px;background:repeating-linear-gradient(#8a8a8a 0 1px,transparent 1px 2px);opacity:.7"></div>
<div class="a" style="left:897px;top:302px;width:91px;height:17px;background:#3a3a3a;"></div>
<div class="a" style="left:898px;top:303px;width:17px;height:15px;background:#4b86d4;border-radius:2px;"></div>
<svg class="a" style="left:898px;top:303px" width="17" height="15" viewBox="0 0 17 15"><g fill="#5ad8dc" stroke="#1c4446" stroke-width=".6"><circle cx="5" cy="6" r="1.9"/><circle cx="11.6" cy="4" r="1.9"/><circle cx="10.4" cy="11" r="1.9"/></g></svg>
<svg class="a" style="left:918px;top:304px" width="14" height="13" viewBox="0 0 14 13"><path d="M1.4 7L11.4 1.4L9.4 11.6Z" fill="none" stroke="#33c3c8" stroke-width="1.3"/></svg>
<svg class="a" style="left:936px;top:304px" width="12" height="13" viewBox="0 0 12 13"><path d="M2.2 1.2A5.4 5.4 0 1 1 2.2 11.8A7 7 0 0 0 2.2 1.2Z" fill="none" stroke="#33c3c8" stroke-width="1.3"/></svg>
<svg class="a" style="left:954px;top:304px" width="12" height="13" viewBox="0 0 12 13"><rect x="0.8" y="1.4" width="10" height="10" fill="#33c3c8"/></svg>
<svg class="a" style="left:971px;top:303px" width="14" height="15" viewBox="0 0 14 15"><path d="M6.8 1L12.4 3.8V10.6L6.8 13.6L1.2 10.6V3.8Z" fill="#33c3c8"/><path d="M1.2 3.8L6.8 6.8L12.4 3.8M6.8 6.8V13.6" stroke="#1c5458" stroke-width="1" fill="none"/></svg>
<div class="a" style="left:891px;top:326px;width:7px;height:7px;background:#5a5a5a;"></div>
<div class="t" style="left:899.5px;top:324.8px;font-size:8.7px;line-height:10px;color:#858585;">By Vertex</div>
<div class="a" style="left:891px;top:340px;width:7px;height:7px;background:#666;"></div>
<div class="t" style="left:899.5px;top:338.5px;font-size:8.7px;line-height:10px;color:#ececec;transform:scaleX(0.949);transform-origin:0 50%;">Ignore Backfacing</div>
<div class="a" style="left:891px;top:355px;width:7px;height:7px;background:#5a5a5a;"></div>
<div class="t" style="left:899.5px;top:353.8px;font-size:8.7px;line-height:10px;color:#858585;transform:scaleX(0.953);transform-origin:0 50%;">By Angle:</div>
<div class="a" style="left:941px;top:353px;width:60px;height:12px;background:#5a5a5a;"></div>
<div class="t" style="left:942.5px;top:354.0px;font-size:8.7px;line-height:10px;color:#808080;transform:scaleX(1.064);transform-origin:0 50%;">45.0</div>
<svg class="a" style="left:995px;top:354px" width="5" height="10" viewBox="0 0 5 10"><path d="M0.4 4L2.5 1L4.6 4ZM0.4 6L2.5 9L4.6 6Z" fill="#8a8a8a"/></svg>
<div class="a" style="left:890px;top:367px;width:53px;height:12px;background:#646464;border-radius:2px;"></div>
<div class="a" style="left:949px;top:367px;width:53px;height:12px;background:#646464;border-radius:2px;"></div>
<div class="t" style="left:903.5px;top:368.5px;font-size:8.7px;line-height:10px;color:#ececec;transform:scaleX(1.056);transform-origin:0 50%;">Shrink</div>
<div class="t" style="left:964.5px;top:368.5px;font-size:8.7px;line-height:10px;color:#ececec;">Grow</div>
<div class="a" style="left:890px;top:384px;width:41px;height:12px;background:#5a5a5a;border-radius:2px;"></div>
<div class="t" style="left:901.5px;top:385.5px;font-size:8.7px;line-height:10px;color:#808080;">Ring</div>
<div class="a" style="left:934px;top:384px;width:8px;height:12px;background:#5a5a5a;"></div>
<svg class="a" style="left:936px;top:385px" width="5" height="10" viewBox="0 0 5 10"><path d="M0.4 4L2.5 1L4.6 4ZM0.4 6L2.5 9L4.6 6Z" fill="#8a8a8a"/></svg>
<div class="a" style="left:949px;top:384px;width:41px;height:12px;background:#5a5a5a;border-radius:2px;"></div>
<div class="t" style="left:959.5px;top:385.5px;font-size:8.7px;line-height:10px;color:#808080;transform:scaleX(1.035);transform-origin:0 50%;">Loop</div>
<div class="a" style="left:993px;top:384px;width:8px;height:12px;background:#5a5a5a;"></div>
<svg class="a" style="left:995px;top:385px" width="5" height="10" viewBox="0 0 5 10"><path d="M0.4 4L2.5 1L4.6 4ZM0.4 6L2.5 9L4.6 6Z" fill="#8a8a8a"/></svg>
<div class="a" style="left:883px;top:404px;width:119px;height:25px;background:transparent;border:1px solid #3a3a3a;border-radius:3px;"></div>
<div class="a" style="left:885px;top:398px;width:68px;height:12px;background:#515151"></div>
<div class="t" style="left:887.0px;top:399.8px;font-size:8.7px;line-height:10px;color:#ececec;transform:scaleX(0.934);transform-origin:0 50%;">Preview Selection</div>
<svg class="a" style="left:886px;top:415px" width="8" height="8" viewBox="0 0 8 8"><circle cx="4" cy="4" r="3.4" fill="#3a3a3a"/><circle cx="3.6" cy="3.6" r="2.2" fill="#f4f4f4"/></svg>
<div class="t" style="left:898.5px;top:413.8px;font-size:8.7px;line-height:10px;color:#ececec;transform:scaleX(1.137);transform-origin:0 50%;">Off</div>
<svg class="a" style="left:922px;top:415px" width="8" height="8" viewBox="0 0 8 8"><circle cx="4" cy="4" r="3.4" fill="#3e3e3e"/></svg>
<div class="t" style="left:935.0px;top:413.8px;font-size:8.7px;line-height:10px;color:#ececec;transform:scaleX(0.949);transform-origin:0 50%;">SubObj</div>
<svg class="a" style="left:969px;top:415px" width="8" height="8" viewBox="0 0 8 8"><circle cx="4" cy="4" r="3.4" fill="#3e3e3e"/></svg>
<div class="t" style="left:981.5px;top:413.8px;font-size:8.7px;line-height:10px;color:#ececec;transform:scaleX(0.981);transform-origin:0 50%;">Multi</div>
<div class="t" style="left:924.5px;top:434.0px;font-size:8.7px;line-height:10px;color:#ececec;transform:scaleX(0.922);transform-origin:0 50%;">18 Vertices Selected</div>
<div class="a" style="left:1019.5px;top:285.5px;width:2.5px;height:160px;background:#383838;"></div>
<div class="a" style="left:1019.5px;top:285.5px;width:2.5px;height:30px;background:#585858;"></div>
<div class="a" style="left:0px;top:448px;width:1024px;height:79px;background:#444;"></div>
<div class="a" style="left:1px;top:453px;width:1px;height:34px;background:repeating-linear-gradient(#9a9a9a 0 1px,transparent 1px 2px);opacity:.55"></div><div class="a" style="left:3px;top:454px;width:1px;height:33px;background:repeating-linear-gradient(#9a9a9a 0 1px,transparent 1px 2px);opacity:.55"></div>
<div class="a" style="left:8px;top:452px;width:10px;height:12px;background:#535353;border-radius:2px;"></div>
<div class="a" style="left:20px;top:452px;width:92px;height:12px;background:#5a5a5a;border-radius:2px;"></div>
<div class="a" style="left:114px;top:452px;width:10px;height:12px;background:#535353;border-radius:2px;"></div>
<div class="t" style="left:9.5px;top:453.0px;font-size:9.5px;line-height:11px;color:#d4d4d4;transform:scaleX(1.169);transform-origin:0 50%;">&lt;</div>
<div class="t" style="left:115.5px;top:453.0px;font-size:9.5px;line-height:11px;color:#d4d4d4;transform:scaleX(1.169);transform-origin:0 50%;">&gt;</div>
<div class="t" style="left:51.5px;top:454.0px;font-size:8.7px;line-height:10px;color:#d8d8d8;transform:scaleX(1.016);transform-origin:0 50%;">0 / 100</div>
<div class="a" style="left:7px;top:467px;width:982px;height:1px;background:#1a1a1a;"></div>
<div class="a" style="left:45px;top:468px;width:944px;height:19px;background:#2b2b2b;"></div>
<svg class="a" style="left:17px;top:473px" width="12" height="10" viewBox="0 0 12 10"><rect x="0" y="1" width="2" height="8" fill="#8a8a8a"/><path d="M0 2.5H2M0 4.5H2M0 6.5H2" stroke="#444" stroke-width=".8"/><path d="M3.6 6.4q1.6 -5.6 3.4 -0.6t3.6 0.2" fill="none" stroke="#33c3c8" stroke-width="1.2"/></svg>
<svg class="a" style="left:0px;top:469px" width="1024" height="10" viewBox="0 0 1024 10"><rect x="47.70" y="0" width="1" height="8" fill="#5e5e5e"/><rect x="57.06" y="0" width="1" height="7" fill="#5e5e5e"/><rect x="66.42" y="0" width="1" height="7" fill="#5e5e5e"/><rect x="75.78" y="0" width="1" height="7" fill="#5e5e5e"/><rect x="85.14" y="0" width="1" height="7" fill="#5e5e5e"/><rect x="94.50" y="0" width="1" height="8" fill="#5e5e5e"/><rect x="103.86" y="0" width="1" height="7" fill="#5e5e5e"/><rect x="113.22" y="0" width="1" height="7" fill="#5e5e5e"/><rect x="122.58" y="0" width="1" height="7" fill="#5e5e5e"/><rect x="131.94" y="0" width="1" height="7" fill="#5e5e5e"/><rect x="141.30" y="0" width="1" height="8" fill="#5e5e5e"/><rect x="150.66" y="0" width="1" height="7" fill="#5e5e5e"/><rect x="160.02" y="0" width="1" height="7" fill="#5e5e5e"/><rect x="169.38" y="0" width="1" height="7" fill="#5e5e5e"/><rect x="178.74" y="0" width="1" height="7" fill="#5e5e5e"/><rect x="188.10" y="0" width="1" height="8" fill="#5e5e5e"/><rect x="197.46" y="0" width="1" height="7" fill="#5e5e5e"/><rect x="206.82" y="0" width="1" height="7" fill="#5e5e5e"/><rect x="216.18" y="0" width="1" height="7" fill="#5e5e5e"/><rect x="225.54" y="0" width="1" height="7" fill="#5e5e5e"/><rect x="234.90" y="0" width="1" height="8" fill="#5e5e5e"/><rect x="244.26" y="0" width="1" height="7" fill="#5e5e5e"/><rect x="253.62" y="0" width="1" height="7" fill="#5e5e5e"/><rect x="262.98" y="0" width="1" height="7" fill="#5e5e5e"/><rect x="272.34" y="0" width="1" height="7" fill="#5e5e5e"/><rect x="281.70" y="0" width="1" height="8" fill="#5e5e5e"/><rect x="291.06" y="0" width="1" height="7" fill="#5e5e5e"/><rect x="300.42" y="0" width="1" height="7" fill="#5e5e5e"/><rect x="309.78" y="0" width="1" height="7" fill="#5e5e5e"/><rect x="319.14" y="0" width="1" height="7" fill="#5e5e5e"/><rect x="328.50" y="0" width="1" height="8" fill="#5e5e5e"/><rect x="337.86" y="0" width="1" height="7" fill="#5e5e5e"/><rect x="347.22" y="0" width="1" height="7" fill="#5e5e5e"/><rect x="356.58" y="0" width="1" height="7" fill="#5e5e5e"/><rect x="365.94" y="0" width="1" height="7" fill="#5e5e5e"/><rect x="375.30" y="0" width="1" height="8" fill="#5e5e5e"/><rect x="384.66" y="0" width="1" height="7" fill="#5e5e5e"/><rect x="394.02" y="0" width="1" height="7" fill="#5e5e5e"/><rect x="403.38" y="0" width="1" height="7" fill="#5e5e5e"/><rect x="412.74" y="0" width="1" height="7" fill="#5e5e5e"/><rect x="422.10" y="0" width="1" height="8" fill="#5e5e5e"/><rect x="431.46" y="0" width="1" height="7" fill="#5e5e5e"/><rect x="440.82" y="0" width="1" height="7" fill="#5e5e5e"/><rect x="450.18" y="0" width="1" height="7" fill="#5e5e5e"/><rect x="459.54" y="0" width="1" height="7" fill="#5e5e5e"/><rect x="468.90" y="0" width="1" height="8" fill="#5e5e5e"/><rect x="478.26" y="0" width="1" height="7" fill="#5e5e5e"/><rect x="487.62" y="0" width="1" height="7" fill="#5e5e5e"/><rect x="496.98" y="0" width="1" height="7" fill="#5e5e5e"/><rect x="506.34" y="0" width="1" height="7" fill="#5e5e5e"/><rect x="515.70" y="0" width="1" height="8" fill="#5e5e5e"/><rect x="525.06" y="0" width="1" height="7" fill="#5e5e5e"/><rect x="534.42" y="0" width="1" height="7" fill="#5e5e5e"/><rect x="543.78" y="0" width="1" height="7" fill="#5e5e5e"/><rect x="553.14" y="0" width="1" height="7" fill="#5e5e5e"/><rect x="562.50" y="0" width="1" height="8" fill="#5e5e5e"/><rect x="571.86" y="0" width="1" height="7" fill="#5e5e5e"/><rect x="581.22" y="0" width="1" height="7" fill="#5e5e5e"/><rect x="590.58" y="0" width="1" height="7" fill="#5e5e5e"/><rect x="599.94" y="0" width="1" height="7" fill="#5e5e5e"/><rect x="609.30" y="0" width="1" height="8" fill="#5e5e5e"/><rect x="618.66" y="0" width="1" height="7" fill="#5e5e5e"/><rect x="628.02" y="0" width="1" height="7" fill="#5e5e5e"/><rect x="637.38" y="0" width="1" height="7" fill="#5e5e5e"/><rect x="646.74" y="0" width="1" height="7" fill="#5e5e5e"/><rect x="656.10" y="0" width="1" height="8" fill="#5e5e5e"/><rect x="665.46" y="0" width="1" height="7" fill="#5e5e5e"/><rect x="674.82" y="0" width="1" height="7" fill="#5e5e5e"/><rect x="684.18" y="0" width="1" height="7" fill="#5e5e5e"/><rect x="693.54" y="0" width="1" height="7" fill="#5e5e5e"/><rect x="702.90" y="0" width="1" height="8" fill="#5e5e5e"/><rect x="712.26" y="0" width="1" height="7" fill="#5e5e5e"/><rect x="721.62" y="0" width="1" height="7" fill="#5e5e5e"/><rect x="730.98" y="0" width="1" height="7" fill="#5e5e5e"/><rect x="740.34" y="0" width="1" height="7" fill="#5e5e5e"/><rect x="749.70" y="0" width="1" height="8" fill="#5e5e5e"/><rect x="759.06" y="0" width="1" height="7" fill="#5e5e5e"/><rect x="768.42" y="0" width="1" height="7" fill="#5e5e5e"/><rect x="777.78" y="0" width="1" height="7" fill="#5e5e5e"/><rect x="787.14" y="0" width="1" height="7" fill="#5e5e5e"/><rect x="796.50" y="0" width="1" height="8" fill="#5e5e5e"/><rect x="805.86" y="0" width="1" height="7" fill="#5e5e5e"/><rect x="815.22" y="0" width="1" height="7" fill="#5e5e5e"/><rect x="824.58" y="0" width="1" height="7" fill="#5e5e5e"/><rect x="833.94" y="0" width="1" height="7" fill="#5e5e5e"/><rect x="843.30" y="0" width="1" height="8" fill="#5e5e5e"/><rect x="852.66" y="0" width="1" height="7" fill="#5e5e5e"/><rect x="862.02" y="0" width="1" height="7" fill="#5e5e5e"/><rect x="871.38" y="0" width="1" height="7" fill="#5e5e5e"/><rect x="880.74" y="0" width="1" height="7" fill="#5e5e5e"/><rect x="890.10" y="0" width="1" height="8" fill="#5e5e5e"/><rect x="899.46" y="0" width="1" height="7" fill="#5e5e5e"/><rect x="908.82" y="0" width="1" height="7" fill="#5e5e5e"/><rect x="918.18" y="0" width="1" height="7" fill="#5e5e5e"/><rect x="927.54" y="0" width="1" height="7" fill="#5e5e5e"/><rect x="936.90" y="0" width="1" height="8" fill="#5e5e5e"/><rect x="946.26" y="0" width="1" height="7" fill="#5e5e5e"/><rect x="955.62" y="0" width="1" height="7" fill="#5e5e5e"/><rect x="964.98" y="0" width="1" height="7" fill="#5e5e5e"/><rect x="974.34" y="0" width="1" height="7" fill="#5e5e5e"/><rect x="983.70" y="0" width="1" height="8" fill="#5e5e5e"/></svg>
<div class="a" style="left:46px;top:469px;width:6px;height:18px;background:#b39a2a;border:1px solid #6e5e14;"></div>
<div class="t" style="left:45.8px;top:477.3px;font-size:8px;line-height:10px;color:#5a4a10;transform:scaleX(1.078);transform-origin:0 50%;">0</div>
<div class="t" style="left:92.6px;top:477.3px;font-size:8px;line-height:10px;color:#bcbcbc;transform:scaleX(1.078);transform-origin:0 50%;">5</div>
<div class="t" style="left:137.6px;top:477.3px;font-size:8px;line-height:10px;color:#bcbcbc;transform:scaleX(0.943);transform-origin:0 50%;">10</div>
<div class="t" style="left:184.4px;top:477.3px;font-size:8px;line-height:10px;color:#bcbcbc;transform:scaleX(0.943);transform-origin:0 50%;">15</div>
<div class="t" style="left:231.2px;top:477.3px;font-size:8px;line-height:10px;color:#bcbcbc;transform:scaleX(0.943);transform-origin:0 50%;">20</div>
<div class="t" style="left:278.0px;top:477.3px;font-size:8px;line-height:10px;color:#bcbcbc;transform:scaleX(0.943);transform-origin:0 50%;">25</div>
<div class="t" style="left:324.8px;top:477.3px;font-size:8px;line-height:10px;color:#bcbcbc;transform:scaleX(0.943);transform-origin:0 50%;">30</div>
<div class="t" style="left:371.6px;top:477.3px;font-size:8px;line-height:10px;color:#bcbcbc;transform:scaleX(0.943);transform-origin:0 50%;">35</div>
<div class="t" style="left:418.4px;top:477.3px;font-size:8px;line-height:10px;color:#bcbcbc;transform:scaleX(0.943);transform-origin:0 50%;">40</div>
<div class="t" style="left:465.2px;top:477.3px;font-size:8px;line-height:10px;color:#bcbcbc;transform:scaleX(0.943);transform-origin:0 50%;">45</div>
<div class="t" style="left:512.0px;top:477.3px;font-size:8px;line-height:10px;color:#bcbcbc;transform:scaleX(0.943);transform-origin:0 50%;">50</div>
<div class="t" style="left:558.8px;top:477.3px;font-size:8px;line-height:10px;color:#bcbcbc;transform:scaleX(0.943);transform-origin:0 50%;">55</div>
<div class="t" style="left:605.6px;top:477.3px;font-size:8px;line-height:10px;color:#bcbcbc;transform:scaleX(0.943);transform-origin:0 50%;">60</div>
<div class="t" style="left:652.4px;top:477.3px;font-size:8px;line-height:10px;color:#bcbcbc;transform:scaleX(0.943);transform-origin:0 50%;">65</div>
<div class="t" style="left:699.2px;top:477.3px;font-size:8px;line-height:10px;color:#bcbcbc;transform:scaleX(0.943);transform-origin:0 50%;">70</div>
<div class="t" style="left:746.0px;top:477.3px;font-size:8px;line-height:10px;color:#bcbcbc;transform:scaleX(0.943);transform-origin:0 50%;">75</div>
<div class="t" style="left:792.8px;top:477.3px;font-size:8px;line-height:10px;color:#bcbcbc;transform:scaleX(0.943);transform-origin:0 50%;">80</div>
<div class="t" style="left:839.6px;top:477.3px;font-size:8px;line-height:10px;color:#bcbcbc;transform:scaleX(0.943);transform-origin:0 50%;">85</div>
<div class="t" style="left:886.4px;top:477.3px;font-size:8px;line-height:10px;color:#bcbcbc;transform:scaleX(0.943);transform-origin:0 50%;">90</div>
<div class="t" style="left:933.2px;top:477.3px;font-size:8px;line-height:10px;color:#bcbcbc;transform:scaleX(0.943);transform-origin:0 50%;">95</div>
<div class="t" style="left:978.1px;top:477.3px;font-size:8px;line-height:10px;color:#bcbcbc;transform:scaleX(0.913);transform-origin:0 50%;">100</div>
<div class="a" style="left:3px;top:491px;width:74px;height:36px;background:#e4e4e4;border:1px solid #9a9a9a;"></div>
<div class="a" style="left:5px;top:493px;width:70px;height:14px;background:#e6c9c9;"></div>
<div class="a" style="left:5px;top:510px;width:70px;height:15px;background:#fafafa;"></div>
<div class="a" style="left:4px;top:507px;width:72px;height:3px;background:#8a8a8a;"></div>
<div class="a" style="left:4px;top:508px;width:72px;height:1px;background:#f2f2f2;"></div>
<div class="a" style="left:5px;top:510px;width:69px;height:15px;overflow:hidden"><div class="t" style="left:2.5px;top:1.5px;font-family:'Liberation Mono',monospace;font-size:8.8px;line-height:12px;color:#8c8c8c;letter-spacing:0px">MAXScript Mini Listener</div></div>
<div class="a" style="left:81px;top:490px;width:1px;height:37px;background:repeating-linear-gradient(#1c1c1c 0 1px,transparent 1px 2px)"></div>
<div class="t" style="left:84.0px;top:495.8px;font-size:8.7px;line-height:10px;color:#e6e6e6;transform:scaleX(0.933);transform-origin:0 50%;">1 Object Selected</div>
<div class="t" style="left:83.5px;top:514.5px;font-size:8.7px;line-height:10px;color:#e6e6e6;transform:scaleX(0.929);transform-origin:0 50%;">Click or click-and-drag to select objects</div>
<svg class="a" style="left:353px;top:494px" width="12" height="12" viewBox="0 0 12 12"><path d="M0.6 3V0.6H3M9 0.6H11.4V3M11.4 9V11.4H9M3 11.4H0.6V9" fill="none" stroke="#d9d9d9" stroke-width="1"/><rect x="3.6" y="3.6" width="4.8" height="4.8" fill="#33c3c8"/></svg>
<svg class="a" style="left:375px;top:494px" width="9" height="12" viewBox="0 0 9 12"><path d="M2.4 5.2V3.4a2.1 2.1 0 0 1 4.2 0V5.2" fill="none" stroke="#d9d9d9" stroke-width="1.2"/><rect x="0.8" y="5.2" width="7.4" height="6.2" fill="#d9d9d9"/><rect x="4" y="7" width="1.2" height="2.6" fill="#444"/></svg>
<svg class="a" style="left:394px;top:494px" width="12" height="12" viewBox="0 0 12 12"><rect x="0.6" y="0.6" width="10.8" height="10.8" fill="none" stroke="#d9d9d9" stroke-width="1"/><circle cx="6" cy="6" r="3" fill="none" stroke="#d9d9d9" stroke-width="1.2"/><path d="M6 1V4M6 8V11M1 6H4M8 6H11" stroke="#d9d9d9" stroke-width="1"/></svg>
<div class="t" style="left:410.5px;top:495.5px;font-size:8.7px;line-height:10px;color:#e0e0e0;transform:scaleX(1.036);transform-origin:0 50%;font-weight:bold;">X:</div>
<div class="a" style="left:421.5px;top:494px;width:42.5px;height:13px;background:#5b5b5b;"></div>
<div class="t" style="left:423.5px;top:495.8px;font-size:8.7px;line-height:10px;color:#8c8c8c;transform:scaleX(1.016);transform-origin:0 50%;">12.317</div>
<div class="t" style="left:473.5px;top:495.5px;font-size:8.7px;line-height:10px;color:#e0e0e0;transform:scaleX(1.118);transform-origin:0 50%;font-weight:bold;">Y:</div>
<div class="a" style="left:484.5px;top:494px;width:42.5px;height:13px;background:#5b5b5b;"></div>
<div class="t" style="left:486.5px;top:495.8px;font-size:8.7px;line-height:10px;color:#8c8c8c;transform:scaleX(1.135);transform-origin:0 50%;">-0.0</div>
<div class="t" style="left:537.0px;top:495.5px;font-size:8.7px;line-height:10px;color:#e0e0e0;transform:scaleX(1.036);transform-origin:0 50%;font-weight:bold;">Z:</div>
<div class="a" style="left:548px;top:494px;width:42.5px;height:13px;background:#5b5b5b;"></div>
<div class="t" style="left:550.5px;top:495.8px;font-size:8.7px;line-height:10px;color:#8c8c8c;transform:scaleX(0.978);transform-origin:0 50%;">13.407</div>
<div class="t" style="left:601.5px;top:495.5px;font-size:8.7px;line-height:10px;color:#e6e6e6;">Grid = 10.0</div>
<div class="a" style="left:581px;top:509px;width:1px;height:16px;background:#2a2a2a;"></div>
<div class="a" style="left:583px;top:511px;width:16px;height:15px;background:#4b86d4;border-radius:2px;"></div>
<svg class="a" style="left:585px;top:513px" width="12" height="11" viewBox="0 0 12 11"><path d="M6 0.6L11 3V8L6 10.4L1 8V3Z" fill="#3a3a3a" stroke="#d9d9d9" stroke-width=".9"/><path d="M1 3L6 5.4L11 3M6 5.4V10.4" fill="none" stroke="#d9d9d9" stroke-width=".8"/></svg>
<div class="t" style="left:602.0px;top:514.0px;font-size:8.7px;line-height:10px;color:#e6e6e6;transform:scaleX(0.953);transform-origin:0 50%;">Add Time Tag</div>
<svg class="a" style="left:686px;top:496px" width="13" height="8" viewBox="0 0 13 8"><rect x="0.6" y="0.4" width="1.5" height="7.2" fill="#dcdcdc"/><path d="M7 0.4V7.6L2.6 4ZM12 0.4V7.6L7.6 4Z" fill="#dcdcdc"/></svg>
<div class="a" style="left:702px;top:493px;width:2px;height:14px;background:#2c2c2c;"></div>
<svg class="a" style="left:706px;top:496px" width="13" height="8" viewBox="0 0 13 8"><path d="M5.4 0.4V7.6L0.6 4Z" fill="#dcdcdc"/><rect x="6.8" y="0.4" width="1.6" height="7.2" fill="#dcdcdc"/><rect x="9.8" y="0.4" width="1.6" height="7.2" fill="#dcdcdc"/></svg>
<svg class="a" style="left:724px;top:495px" width="13" height="12" viewBox="0 0 13 12"><path d="M1 0.6L9.8 5.4L1 10.2Z" fill="#dcdcdc"/><path d="M12.6 9V11.6H10Z" fill="#cfcfcf"/></svg>
<svg class="a" style="left:740px;top:496px" width="13" height="8" viewBox="0 0 13 8"><rect x="1" y="0.4" width="1.6" height="7.2" fill="#dcdcdc"/><rect x="4" y="0.4" width="1.6" height="7.2" fill="#dcdcdc"/><path d="M7 0.4V7.6L11.8 4Z" fill="#dcdcdc"/></svg>
<div class="a" style="left:756px;top:493px;width:2px;height:14px;background:#2c2c2c;"></div>
<svg class="a" style="left:760px;top:496px" width="13" height="8" viewBox="0 0 13 8"><path d="M0.8 0.4V7.6L5.2 4ZM5.8 0.4V7.6L10.2 4Z" fill="#dcdcdc"/><rect x="10.8" y="0.4" width="1.5" height="7.2" fill="#dcdcdc"/></svg>
<svg class="a" style="left:688px;top:513px" width="10" height="8" viewBox="0 0 10 8"><path d="M4 0.6V7.4L0.4 4ZM5.8 0.6V7.4L9.4 4Z" fill="#dcdcdc"/></svg>
<div class="a" style="left:702px;top:510px;width:2px;height:15px;background:#2c2c2c;"></div>
<div class="a" style="left:704.5px;top:510.5px;width:51.5px;height:13.5px;background:#5b5b5b;border-radius:1px;"></div>
<div class="t" style="left:706.5px;top:512.0px;font-size:8.7px;line-height:10px;color:#dcdcdc;transform:scaleX(1.135);transform-origin:0 50%;">0</div>
<svg class="a" style="left:749px;top:512px" width="5" height="10" viewBox="0 0 5 10"><path d="M0.6 4L2.5 1.4L4.4 4ZM0.6 6L2.5 8.6L4.4 6Z" fill="#cfcfcf"/></svg>
<div class="a" style="left:756px;top:510px;width:2px;height:15px;background:#2c2c2c;"></div>
<svg class="a" style="left:761px;top:511px" width="13" height="13" viewBox="0 0 13 13"><circle cx="5" cy="5" r="4" fill="#dcdcdc"/><path d="M5 2.2V5H7.4" fill="none" stroke="#444" stroke-width="1.1"/><circle cx="9" cy="8.6" r="2.2" fill="#444" stroke="#f2a91c" stroke-width="1.3"/></svg>
<div class="a" style="left:783.5px;top:492.7px;width:31px;height:31px;background:#5a5a5a;border-radius:3px;"></div>
<svg class="a" style="left:787px;top:495px" width="28" height="26" viewBox="0 0 28 26"><path d="M11 2.2V21M2.4 11.6H19.6" stroke="#f0f0f0" stroke-width="3.4" fill="none"/><g transform="translate(17.4 18.6) rotate(-40)"><circle cx="-3" cy="0" r="2.2" fill="none" stroke="#33c3c8" stroke-width="1.3"/><path d="M-0.8 0H6.6M4.2 0V2.2M6.2 0V2" stroke="#33c3c8" stroke-width="1.3" fill="none"/></g></svg>
<div class="a" style="left:819px;top:494px;width:34px;height:13px;background:#5b5b5b;border-radius:2px;"></div>
<div class="t" style="left:821.5px;top:495.8px;font-size:8.7px;line-height:10px;color:#d8d8d8;transform:scaleX(0.822);transform-origin:0 50%;">Auto Key</div>
<div class="a" style="left:857px;top:494px;width:86px;height:13px;background:#5b5b5b;border-radius:2px;"></div>
<div class="t" style="left:860.5px;top:495.8px;font-size:8.7px;line-height:10px;color:#d8d8d8;transform:scaleX(0.946);transform-origin:0 50%;">Selected</div>
<svg class="a" style="left:933px;top:499px" width="5" height="3" viewBox="0 0 5 3"><path d="M0 0H5L2.5 3Z" fill="#e0e0e0"/></svg>
<div class="a" style="left:819px;top:510px;width:34px;height:14px;background:#5b5b5b;border-radius:2px;"></div>
<div class="t" style="left:821.5px;top:512.3px;font-size:8.7px;line-height:10px;color:#e0e0e0;transform:scaleX(0.920);transform-origin:0 50%;">Set Key</div>
<svg class="a" style="left:857px;top:510px" width="17" height="15" viewBox="0 0 17 15"><path d="M2.6 3.4L4.6 7.6L3 12.6M11.6 3.4L9.6 7.6L11.2 12.6" fill="none" stroke="#33c3c8" stroke-width="1.3"/><circle cx="7.1" cy="2.4" r="1.3" fill="#d9d9d9"/><circle cx="2.4" cy="2.6" r="1.1" fill="#d9d9d9"/><circle cx="11.8" cy="2.6" r="1.1" fill="#d9d9d9"/><path d="M15.6 11.6V14.4H12.8Z" fill="#cfcfcf"/></svg>
<div class="a" style="left:877px;top:510px;width:66px;height:14px;background:#5b5b5b;border-radius:2px;"></div>
<div class="t" style="left:885.5px;top:512.3px;font-size:8.7px;line-height:10px;color:#e0e0e0;transform:scaleX(0.973);transform-origin:0 50%;">Key Filters...</div>
<svg class="a" style="left:952.5px;top:493.5px" width="11.5" height="11.5" viewBox="0 0 14 14"><circle cx="8.4" cy="5.2" r="4" fill="none" stroke="#d9d9d9" stroke-width="1.5"/><path d="M5.6 8.2L1 13" stroke="#d9d9d9" stroke-width="2"/></svg>
<svg class="a" style="left:970px;top:493.5px" width="11.5" height="11.5" viewBox="0 0 14 14"><circle cx="8.4" cy="5.2" r="4" fill="none" stroke="#d9d9d9" stroke-width="1.5"/><path d="M5.6 8.2L1 13" stroke="#d9d9d9" stroke-width="2"/><rect x="6.4" y="1" width="7.4" height="5" fill="#33c3c8" opacity=".9"/><path d="M7.4 7.6H13.8" stroke="#33c3c8" stroke-width="1.3"/></svg>
<svg class="a" style="left:987px;top:493.5px" width="12" height="12" viewBox="0 0 15 15"><path d="M0.6 3.4V0.6H3.4M11.6 0.6H14.4V3.4M14.4 11.6V14.4H11.6M3.4 14.4H0.6V11.6" fill="none" stroke="#d9d9d9" stroke-width="1.2"/><path d="M7.5 3L11.6 5V10L7.5 12L3.4 10V5Z" fill="#33c3c8"/><path d="M3.4 5L7.5 7L11.6 5M7.5 7V12" stroke="#1c5458" stroke-width=".9" fill="none"/></svg>
<svg class="a" style="left:998px;top:504px" width="3" height="3" viewBox="0 0 3 3"><path d="M3 0V3H0Z" fill="#cfcfcf"/></svg>
<svg class="a" style="left:1005px;top:493.5px" width="13" height="12" viewBox="0 0 15 15"><path d="M9 1L13.6 3.2V9L9 11.2L4.4 9V3.2Z" fill="#33c3c8"/><path d="M4.4 3.2L9 5.4L13.6 3.2M9 5.4V11.2" stroke="#1c5458" stroke-width=".9" fill="none"/><g fill="#d9d9d9"><rect x="0.4" y="7" width="2.6" height="2.6" transform="rotate(45 1.7 8.3)"/><rect x="3" y="10.6" width="2.6" height="2.6" transform="rotate(45 4.3 11.9)"/><rect x="8" y="12" width="2.4" height="2.4" transform="rotate(45 9.2 13.2)"/></g></svg>
<svg class="a" style="left:1017px;top:504px" width="3" height="3" viewBox="0 0 3 3"><path d="M3 0V3H0Z" fill="#cfcfcf"/></svg>
<svg class="a" style="left:952px;top:511px" width="12" height="12" viewBox="0 0 15 15"><rect x="0.8" y="0.8" width="13" height="11" fill="none" stroke="#d9d9d9" stroke-width="1.1" stroke-dasharray="2 1.4"/><circle cx="8" cy="6.2" r="3" fill="none" stroke="#33c3c8" stroke-width="1.4"/><path d="M5.8 8.4L2.4 12.4" stroke="#33c3c8" stroke-width="1.7"/></svg>
<svg class="a" style="left:971px;top:511px" width="10.5" height="12" viewBox="0 0 13 15"><path d="M3 14Q0.8 10 1 7.4L2.4 7L3.6 9V3a1 1 0 0 1 2 0V2a1 1 0 0 1 2 0V2.6a1 1 0 0 1 2 0V4a1 1 0 0 1 2 0V10Q11.6 12.6 10 14Z" fill="#d9d9d9"/></svg>
<svg class="a" style="left:987px;top:511px" width="12.5" height="12" viewBox="0 0 15 15"><ellipse cx="7.5" cy="6" rx="4.6" ry="4.4" fill="#d9d9d9"/><path d="M7.5 1.6A4.4 4.4 0 0 0 3 6H7.5Z" fill="#33c3c8"/><ellipse cx="7.5" cy="7" rx="7" ry="2.4" fill="none" stroke="#d9d9d9" stroke-width="1.1" transform="rotate(-24 7.5 7)"/><path d="M2 11.6L5.4 10.4L4.6 13.4Z" fill="#d9d9d9"/></svg>
<svg class="a" style="left:998px;top:521px" width="3" height="3" viewBox="0 0 3 3"><path d="M3 0V3H0Z" fill="#cfcfcf"/></svg>
<svg class="a" style="left:1004.5px;top:510.5px" width="12" height="12" viewBox="0 0 15 15"><rect x="0.8" y="0.8" width="13.4" height="13.4" fill="none" stroke="#d9d9d9" stroke-width="1.4"/><rect x="1.6" y="8" width="5.4" height="5.4" fill="#d9d9d9"/><path d="M7 8L12 3M8.4 2.6H12.4V6.6" fill="none" stroke="#d9d9d9" stroke-width="1.6"/></svg>
<div class="t" style="left:793.0px;top:471.8px;font-size:13.2px;line-height:16px;color:rgba(200,200,200,0.5);transform:scaleX(1.139);transform-origin:0 50%;">Activate Windows</div>
<div class="t" style="left:792.0px;top:491.4px;font-size:9.6px;line-height:12px;color:rgba(200,200,200,0.45);transform:scaleX(1.161);transform-origin:0 50%;">Go to PC settings to activate Windows.</div>

</div>
</body></html>
